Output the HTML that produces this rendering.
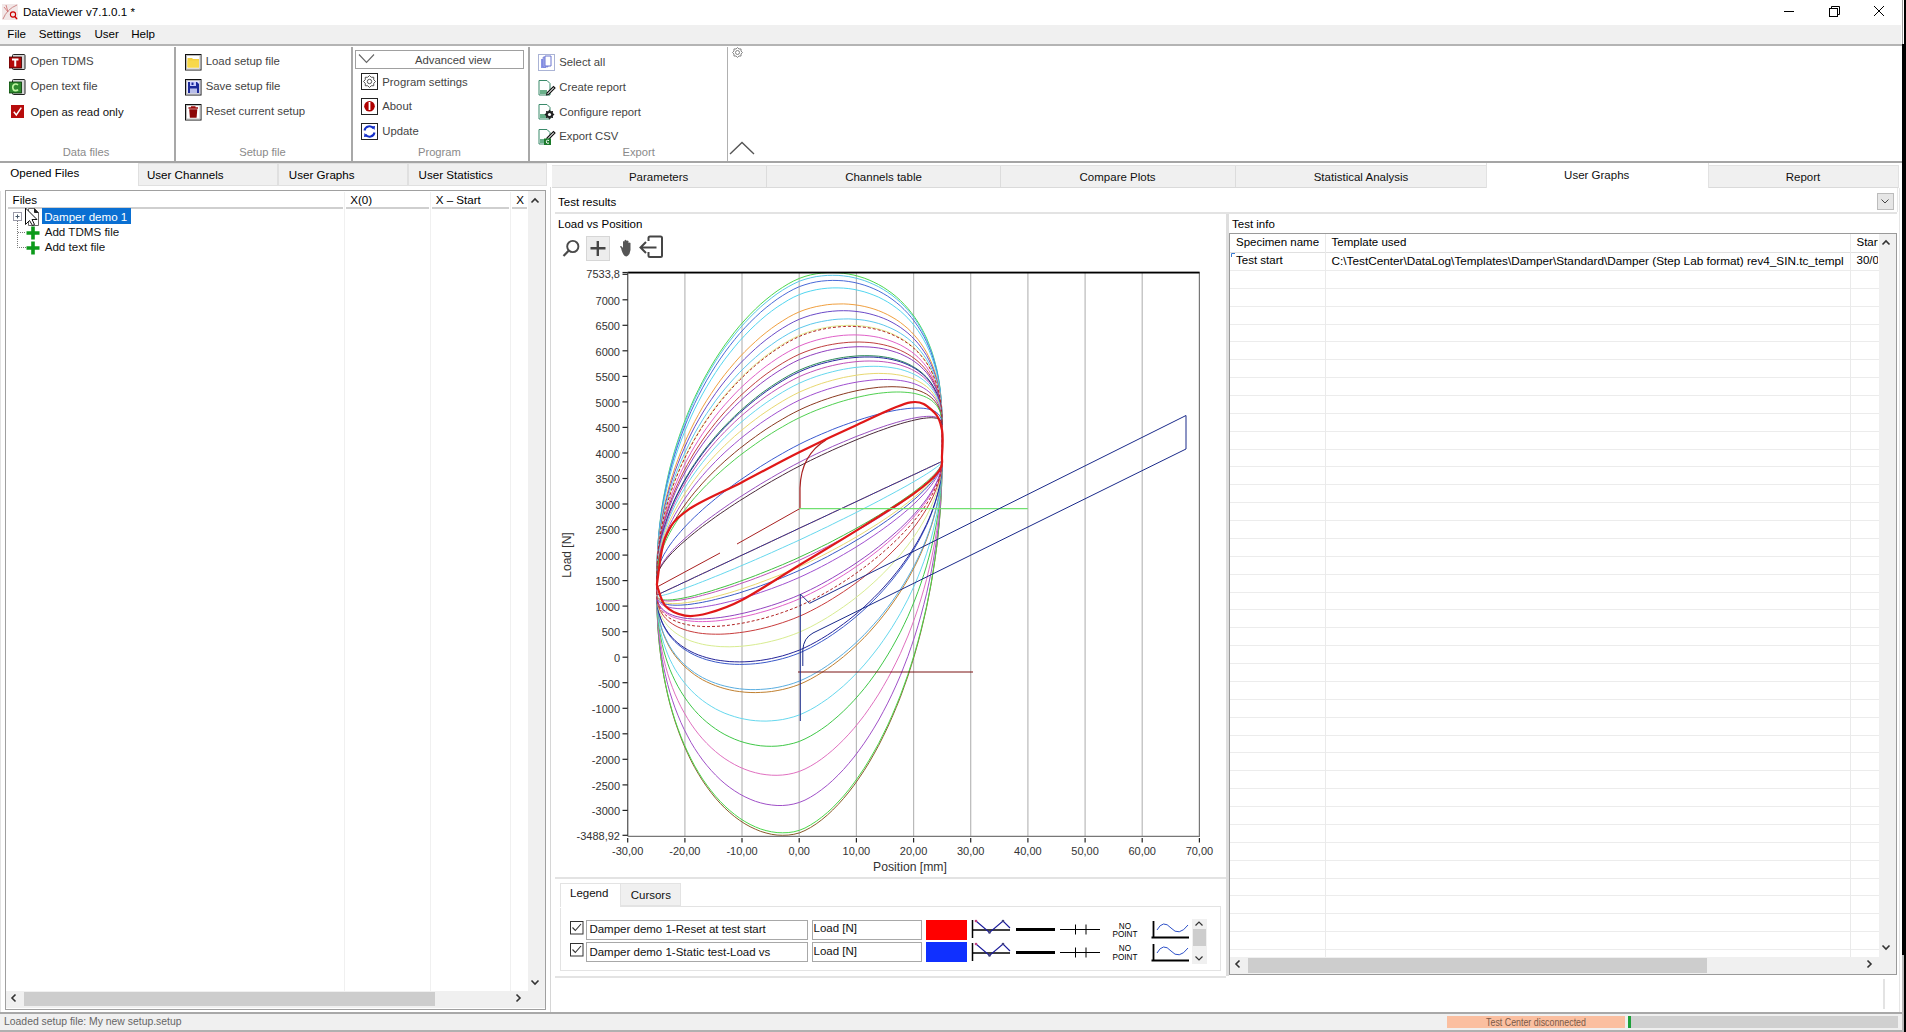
<!DOCTYPE html>
<html><head><meta charset="utf-8"><title>DataViewer</title>
<style>
html,body{margin:0;padding:0;width:1906px;height:1032px;overflow:hidden;background:#fff;position:relative}
.t{position:absolute;font-family:"Liberation Sans",sans-serif;line-height:1;white-space:nowrap}
.r{position:absolute;display:block}
</style></head><body>
<div class="r" style="left:0px;top:0px;width:1906px;height:25px;background:#fff;"></div>
<svg class="r" style="left:2px;top:4px;" width="16" height="16" viewBox="0 0 16 16"><rect x="0" y="0" width="16" height="16" fill="#f2e8e8"/><path d="M1 15 Q5 5 15 1" stroke="#c88" stroke-width="1" fill="none"/><path d="M2 3 L6 8 M4 1 L6 8" stroke="#c66" stroke-width="0.8" fill="none"/><circle cx="11" cy="10.5" r="2.6" stroke="#c00" stroke-width="1.1" fill="none"/><path d="M12.8 12.5 L15 15" stroke="#c00" stroke-width="1.3"/></svg>
<div class="t" style="left:23px;top:6.28px;font-size:11.6px;color:#000;">DataViewer v7.1.0.1 *</div>
<div class="r" style="left:1784px;top:11px;width:10px;height:1px;background:#000;"></div>
<svg class="r" style="left:1828px;top:5px;" width="14" height="12" viewBox="0 0 14 12"><rect x="1.5" y="3.5" width="8" height="8" fill="#fff" stroke="#000"/><path d="M3.5 3.5 V1.5 H11.5 V9.5 H9.5" fill="none" stroke="#000"/></svg>
<svg class="r" style="left:1873px;top:5px;" width="12" height="12" viewBox="0 0 12 12"><path d="M1 1 L11 11 M11 1 L1 11" stroke="#000" stroke-width="1"/></svg>
<div class="r" style="left:0px;top:25px;width:1901px;height:19px;background:#f0f0f0;"></div>
<div class="r" style="left:0px;top:44px;width:1902px;height:2px;background:#b4b4b4;"></div>
<div class="t" style="left:7.3px;top:27.78px;font-size:11.6px;color:#000;">File</div>
<div class="t" style="left:38.8px;top:27.78px;font-size:11.6px;color:#000;">Settings</div>
<div class="t" style="left:94.4px;top:27.78px;font-size:11.6px;color:#000;">User</div>
<div class="t" style="left:131.2px;top:27.78px;font-size:11.6px;color:#000;">Help</div>
<div class="r" style="left:1902px;top:0px;width:1px;height:44px;background:#9a9a9a;"></div>
<div class="r" style="left:1904px;top:0px;width:2px;height:1032px;background:#000;"></div>
<div class="r" style="left:1902px;top:44px;width:2px;height:911px;background:#000;"></div>
<div class="r" style="left:1902px;top:955px;width:1.5px;height:77px;background:#b8b8b8;"></div>
<div class="r" style="left:1903.5px;top:955px;width:0.5px;height:77px;background:#000;"></div>
<div class="r" style="left:174px;top:47px;width:1.5px;height:114px;background:#a8a8a8;"></div>
<div class="r" style="left:351px;top:47px;width:1.5px;height:114px;background:#a8a8a8;"></div>
<div class="r" style="left:528px;top:47px;width:1.5px;height:114px;background:#a8a8a8;"></div>
<div class="r" style="left:727px;top:47px;width:1px;height:114px;background:#b0b0b0;"></div>
<div class="r" style="left:0px;top:161px;width:1902px;height:2px;background:#a5a5a5;"></div>
<div class="t" style="left:86px;transform:translateX(-50%);top:147.02px;font-size:11.2px;color:#8a8a8a;">Data files</div>
<div class="t" style="left:262.5px;transform:translateX(-50%);top:147.02px;font-size:11.2px;color:#8a8a8a;">Setup file</div>
<div class="t" style="left:439.4px;transform:translateX(-50%);top:147.02px;font-size:11.2px;color:#8a8a8a;">Program</div>
<div class="t" style="left:638.7px;transform:translateX(-50%);top:147.02px;font-size:11.2px;color:#8a8a8a;">Export</div>
<svg class="r" style="left:9px;top:54px;" width="17" height="17" viewBox="0 0 17 17"><rect x="3.5" y="0.5" width="12.5" height="15" rx="1" fill="#d8d8d8" stroke="#222"/><rect x="0" y="3" width="12.5" height="11" fill="#b40a0a" stroke="#300" stroke-width="0.8"/><path d="M3 5.5 H9.5 M6.25 5.5 V12.5" stroke="#fff" stroke-width="2"/></svg>
<svg class="r" style="left:9px;top:79px;" width="17" height="17" viewBox="0 0 17 17"><rect x="3.5" y="0.5" width="12.5" height="15" rx="1" fill="#d8d8d8" stroke="#222"/><rect x="0" y="3" width="12.5" height="11" fill="#2f8a2f" stroke="#030" stroke-width="0.8"/><path d="M9 6 Q7.5 4.6 5.6 5.2 Q3.6 6 3.8 8.6 Q4 11.4 6.4 11.6 Q8 11.7 9 10.6" stroke="#bff5a0" stroke-width="1.6" fill="none"/></svg>
<svg class="r" style="left:11px;top:105px;" width="13" height="13" viewBox="0 0 13 13"><rect x="0" y="0" width="13" height="13" fill="#b70c0c"/><path d="M2.8 6.8 L5.3 10 L10.3 2.6" stroke="#fff" stroke-width="1.5" fill="none"/></svg>
<div class="t" style="left:30.5px;top:56.15px;font-size:11.4px;color:#444;">Open TDMS</div>
<div class="t" style="left:30.5px;top:81.15px;font-size:11.4px;color:#444;">Open text file</div>
<div class="t" style="left:30.5px;top:107.15px;font-size:11.4px;color:#111;">Open as read only</div>
<svg class="r" style="left:185px;top:54px;" width="17" height="17" viewBox="0 0 17 17"><rect x="0.5" y="0.5" width="15.5" height="15.5" fill="#fff" stroke="#111"/><rect x="1.5" y="1.5" width="13.5" height="13.5" fill="none" stroke="#bbb"/><path d="M2.5 4 H7 L8 5 H14 V13.5 H2.5 Z" fill="#f3cf3f"/><path d="M2.5 6.5 H14 V13.5 H2.5Z" fill="#f7d84a"/></svg>
<svg class="r" style="left:185px;top:79px;" width="17" height="17" viewBox="0 0 17 17"><rect x="0.5" y="0.5" width="15.5" height="15.5" fill="#e6e6ff" stroke="#111"/><rect x="1.5" y="1.5" width="13.5" height="13.5" fill="none" stroke="#bbb"/><path d="M3 3 H12 L14 5 V14 H3 Z" fill="#1c2a9a"/><rect x="5" y="3" width="6" height="4" fill="#c8ccff"/><rect x="6.5" y="3.5" width="2" height="2.5" fill="#1c2a9a"/><rect x="5" y="9.5" width="7" height="4.5" fill="#b8bde8"/></svg>
<svg class="r" style="left:185px;top:104px;" width="17" height="17" viewBox="0 0 17 17"><rect x="0.5" y="0.5" width="15.5" height="15.5" fill="#fff" stroke="#111"/><rect x="1.5" y="1.5" width="13.5" height="13.5" fill="none" stroke="#bbb"/><path d="M3.5 4 H13 M6 3 H10.5" stroke="#9a0a0a" stroke-width="1.4"/><path d="M4.2 5.2 H12.3 L11.6 13.8 H4.9 Z" fill="#8c0606"/></svg>
<div class="t" style="left:205.7px;top:56.15px;font-size:11.4px;color:#444;">Load setup file</div>
<div class="t" style="left:205.7px;top:81.15px;font-size:11.4px;color:#444;">Save setup file</div>
<div class="t" style="left:205.7px;top:106.15px;font-size:11.4px;color:#444;">Reset current setup</div>
<div class="r" style="left:355px;top:50px;width:169px;height:19px;background:#fff;box-shadow:inset 0 0 0 1px #a0a0a0;"></div>
<svg class="r" style="left:358px;top:52px;" width="17" height="14" viewBox="0 0 17 14"><path d="M1 2.5 L8.5 10.5 L16 2.5" stroke="#666" stroke-width="1.1" fill="none"/></svg>
<div class="t" style="left:415px;top:54.53px;font-size:11.3px;color:#444;">Advanced view</div>
<svg class="r" style="left:361px;top:73px;" width="17" height="17" viewBox="0 0 17 17"><rect x="0.5" y="0.5" width="16" height="16" fill="#fff" stroke="#222"/><polygon points="14.50,8.50 12.75,10.26 12.74,12.74 10.26,12.75 8.50,14.50 6.74,12.75 4.26,12.74 4.25,10.26 2.50,8.50 4.25,6.74 4.26,4.26 6.74,4.25 8.50,2.50 10.26,4.25 12.74,4.26 12.75,6.74" fill="none" stroke="#444" stroke-width="0.9"/><circle cx="8.5" cy="8.5" r="2.2" fill="none" stroke="#444" stroke-width="0.9"/></svg>
<svg class="r" style="left:361px;top:98px;" width="17" height="17" viewBox="0 0 17 17"><rect x="0.5" y="0.5" width="16" height="16" fill="#fff" stroke="#222"/><circle cx="8.5" cy="8.2" r="5.3" fill="#b00000"/><path d="M5 13 L6 11 L8 12Z" fill="#b00000"/><rect x="7.6" y="4" width="1.8" height="8" fill="#fff"/></svg>
<svg class="r" style="left:361px;top:123px;" width="17" height="17" viewBox="0 0 17 17"><rect x="0.5" y="0.5" width="16" height="16" fill="#fff" stroke="#222"/><path d="M3.5 7.5 A5 5 0 0 1 12.5 5.5" stroke="#1530c8" stroke-width="2" fill="none"/><path d="M13.5 9.5 A5 5 0 0 1 4.5 11.5" stroke="#1530c8" stroke-width="2" fill="none"/><path d="M10.5 3.5 L14 3 L13.5 7Z" fill="#1530c8"/><path d="M6.5 13.5 L3 14 L3.5 10Z" fill="#1530c8"/></svg>
<div class="t" style="left:382.3px;top:76.53px;font-size:11.3px;color:#444;">Program settings</div>
<div class="t" style="left:382.3px;top:101.43px;font-size:11.3px;color:#444;">About</div>
<div class="t" style="left:382.3px;top:126.13px;font-size:11.3px;color:#444;">Update</div>
<svg class="r" style="left:538px;top:54px;" width="17" height="17" viewBox="0 0 17 17"><rect x="0.5" y="0.5" width="16" height="16" fill="none" stroke="#5566aa" stroke-dasharray="1,1"/><path d="M3 5 H8 V14 H3Z" fill="#8c96e6"/><path d="M5 3 H10 V13 H5Z" fill="#a8b0f0" stroke="#6a74d0" stroke-width="0.6"/><path d="M7 2 H13 V12 H7Z" fill="#fff" stroke="#6a74d0"/></svg>
<svg class="r" style="left:538px;top:79px;" width="18" height="17" viewBox="0 0 18 17"><path d="M1 1.5 H9 L12 4.5 V16 H1Z" fill="#fff" stroke="#3a8a6a"/><rect x="2" y="11" width="7" height="4" fill="#6ab08a"/><path d="M9 14 L15.5 7.5 L17 9 L10.5 15.5 L8.6 15.8Z" fill="#fff" stroke="#111" stroke-width="1.1"/></svg>
<svg class="r" style="left:538px;top:103px;" width="18" height="17" viewBox="0 0 18 17"><path d="M1 1.5 H9 L12 4.5 V16 H1Z" fill="#fff" stroke="#3a8a6a"/><rect x="2" y="11" width="7" height="4" fill="#6ab08a"/><polygon points="16.50,11.50 14.83,12.88 15.04,15.04 12.88,14.83 11.50,16.50 10.12,14.83 7.96,15.04 8.17,12.88 6.50,11.50 8.17,10.12 7.96,7.96 10.12,8.17 11.50,6.50 12.88,8.17 15.04,7.96 14.83,10.12" fill="#222"/><circle cx="11.5" cy="11.5" r="1.6" fill="#fff"/></svg>
<svg class="r" style="left:538px;top:128px;" width="18" height="17" viewBox="0 0 18 17"><path d="M1 1.5 H9 L12 4.5 V16 H1Z" fill="#fff" stroke="#3a8a6a"/><rect x="2" y="11" width="7" height="4" fill="#6ab08a"/><path d="M9 10 L15.5 3.5 L17 5 L10.5 11.5 L8.6 11.8Z" fill="#fff" stroke="#111" stroke-width="1.1"/><rect x="6" y="10.5" width="7" height="6.5" fill="#1a7a2a"/><path d="M11 12.5 Q9.5 11.8 8.6 12.6 Q8 13.8 8.8 15 Q9.8 15.6 11 15" stroke="#fff" stroke-width="1" fill="none"/></svg>
<div class="t" style="left:559.3px;top:56.93px;font-size:11.3px;color:#444;">Select all</div>
<div class="t" style="left:559.3px;top:81.63px;font-size:11.3px;color:#444;">Create report</div>
<div class="t" style="left:559.3px;top:106.53px;font-size:11.3px;color:#444;">Configure report</div>
<div class="t" style="left:559.3px;top:131.23px;font-size:11.3px;color:#444;">Export CSV</div>
<svg class="r" style="left:732px;top:47px;" width="11" height="11" viewBox="0 0 11 11"><polygon points="10.50,5.50 9.01,6.95 9.04,9.04 6.95,9.01 5.50,10.50 4.05,9.01 1.96,9.04 1.99,6.95 0.50,5.50 1.99,4.05 1.96,1.96 4.05,1.99 5.50,0.50 6.95,1.99 9.04,1.96 9.01,4.05" fill="none" stroke="#777" stroke-width="0.9"/><circle cx="5.5" cy="5.5" r="2" fill="none" stroke="#777" stroke-width="0.9"/></svg>
<svg class="r" style="left:729px;top:140px;" width="26" height="16" viewBox="0 0 26 16"><path d="M1 14 L13 2.5 L25 14" stroke="#555" stroke-width="1.4" fill="none"/></svg>
<div class="r" style="left:0px;top:163px;width:547px;height:849px;background:#fff;"></div>
<div class="r" style="left:0px;top:163px;width:547px;height:23px;background:#f0f0f0;"></div>
<div class="r" style="left:0px;top:163px;width:1px;height:849px;background:#e3e3e3;"></div>
<div class="r" style="left:0px;top:163px;width:138px;height:28px;background:#fff;"></div>
<div class="r" style="left:138px;top:163px;width:140px;height:23px;background:#f0f0f0;box-shadow:inset 0 0 0 1px #e0e0e0;"></div>
<div class="r" style="left:278px;top:163px;width:130px;height:23px;background:#f0f0f0;box-shadow:inset 0 0 0 1px #e0e0e0;"></div>
<div class="r" style="left:408px;top:163px;width:139px;height:23px;background:#f0f0f0;box-shadow:inset 0 0 0 1px #e0e0e0;"></div>
<div class="t" style="left:10.3px;top:167.28px;font-size:11.6px;color:#000;">Opened Files</div>
<div class="t" style="left:146.9px;top:169.48px;font-size:11.6px;color:#000;">User Channels</div>
<div class="t" style="left:288.8px;top:169.48px;font-size:11.6px;color:#000;">User Graphs</div>
<div class="t" style="left:418.6px;top:169.48px;font-size:11.6px;color:#000;">User Statistics</div>
<div class="r" style="left:5px;top:190px;width:541px;height:820px;background:#fff;box-shadow:inset 0 0 0 1px #a0a0a0;"></div>
<div class="t" style="left:12.6px;top:194.18px;font-size:11.6px;color:#000;">Files</div>
<div class="t" style="left:350.2px;top:194.18px;font-size:11.6px;color:#000;">X(0)</div>
<div class="t" style="left:435.7px;top:194.18px;font-size:11.6px;color:#000;">X – Start</div>
<div class="t" style="left:516.2px;top:194.18px;font-size:11.6px;color:#000;">X</div>
<div class="r" style="left:8px;top:207px;width:335px;height:2px;background:#cfcfcf;"></div>
<div class="r" style="left:346px;top:207px;width:83px;height:2px;background:#cfcfcf;"></div>
<div class="r" style="left:432px;top:207px;width:77px;height:2px;background:#cfcfcf;"></div>
<div class="r" style="left:512px;top:207px;width:15px;height:2px;background:#cfcfcf;"></div>
<div class="r" style="left:344px;top:192px;width:1px;height:799px;background:#f0f0f0;"></div>
<div class="r" style="left:430px;top:192px;width:1px;height:799px;background:#f0f0f0;"></div>
<div class="r" style="left:510px;top:192px;width:1px;height:799px;background:#f0f0f0;"></div>
<div class="r" style="left:528px;top:191px;width:17px;height:800px;background:#f0f0f0;"></div>
<svg class="r" style="left:530px;top:196px;" width="12" height="12" viewBox="0 0 12 12"><path d="M1.5 6.5 L5 3 L8.5 6.5" stroke="#333" stroke-width="1.6" fill="none"/></svg>
<svg class="r" style="left:530px;top:977px;" width="12" height="12" viewBox="0 0 12 12"><path d="M1.5 3.5 L5 7 L8.5 3.5" stroke="#333" stroke-width="1.6" fill="none"/></svg>
<div class="r" style="left:6px;top:991px;width:539px;height:17px;background:#f0f0f0;"></div>
<div class="r" style="left:24px;top:992px;width:411px;height:14px;background:#cdcdcd;"></div>
<svg class="r" style="left:9px;top:993px;" width="12" height="12" viewBox="0 0 12 12"><path d="M6.5 1.5 L3 5 L6.5 8.5" stroke="#333" stroke-width="1.6" fill="none"/></svg>
<svg class="r" style="left:513px;top:993px;" width="12" height="12" viewBox="0 0 12 12"><path d="M3.5 1.5 L7 5 L3.5 8.5" stroke="#333" stroke-width="1.6" fill="none"/></svg>
<svg class="r" style="left:12px;top:205.2px;" width="34" height="50" viewBox="0 0 34 50"><rect x="1.5" y="7.5" width="8" height="8" fill="#fff" stroke="#9a9aa8"/><path d="M3.5 11.5 H7.5 M5.5 9.5 V13.5" stroke="#456"/><path d="M5.5 16 V42.5 H14 M6 27.5 H14" stroke="#777" stroke-dasharray="1,1" fill="none"/><path d="M16.5 3.5 H22.5 L26.5 7.5 V20.5 H16.5Z" fill="#fff" stroke="#666"/><path d="M22.5 3.5 V7.5 H26.5" fill="#222" stroke="#222"/><path d="M13.5 3 V19.5 L17.5 15.5 L20.5 20.5 L22.5 19.5 L20 14.5 L25 14.5Z" fill="#fff" stroke="#111" stroke-width="1"/></svg>
<div class="r" style="left:41.5px;top:208px;width:89px;height:15.6px;background:#0a6fd2;"></div>
<div class="t" style="left:44.2px;top:210.98px;font-size:11.6px;color:#fff;">Damper demo 1</div>
<svg class="r" style="left:26px;top:225.5px;" width="14" height="14" viewBox="0 0 14 14"><path d="M7 0.5 V13.5 M0.5 7 H13.5" stroke="#0c9a1a" stroke-width="3.6"/></svg>
<svg class="r" style="left:26px;top:241.3px;" width="14" height="14" viewBox="0 0 14 14"><path d="M7 0.5 V13.5 M0.5 7 H13.5" stroke="#0c9a1a" stroke-width="3.6"/></svg>
<div class="t" style="left:44.7px;top:225.98px;font-size:11.6px;color:#111;">Add TDMS file</div>
<div class="t" style="left:44.7px;top:241.48px;font-size:11.6px;color:#111;">Add text file</div>
<div class="r" style="left:547px;top:163px;width:5px;height:849px;background:#fff;"></div>
<div class="r" style="left:550px;top:187px;width:1px;height:825px;background:#d6d6d6;"></div>
<div class="r" style="left:0px;top:1012px;width:1902px;height:20px;background:#f0f0f0;"></div>
<div class="r" style="left:0px;top:1012px;width:1902px;height:1.5px;background:#a8a8a8;"></div>
<div class="r" style="left:0px;top:1030px;width:1902px;height:2px;background:#b0b0b0;"></div>
<div class="t" style="left:3.5px;top:1015.52px;font-size:11.2px;color:#666;transform:scaleX(0.93);transform-origin:0 0;">Loaded setup file: My new setup.setup</div>
<div class="r" style="left:1447px;top:1016px;width:178px;height:12px;background:#fbbfa0;"></div>
<div class="t" style="left:1536px;top:1017.16px;font-size:10.8px;color:#7a5a48;transform:translateX(-50%) scaleX(0.82);">Test Center disconnected</div>
<div class="r" style="left:1628px;top:1016px;width:2.5px;height:12px;background:#1ea03a;"></div>
<div class="r" style="left:1631px;top:1016px;width:267px;height:12px;background:#d0d0d0;"></div>
<div class="r" style="left:551px;top:163px;width:1351px;height:849px;background:#fff;"></div>
<div class="r" style="left:552px;top:165px;width:1347px;height:23px;background:#f0f0f0;"></div>
<div class="r" style="left:552px;top:165px;width:1347px;height:1px;background:#e2e2e2;"></div>
<div class="r" style="left:552px;top:187px;width:1347px;height:1px;background:#dadada;"></div>
<div class="r" style="left:766px;top:166px;width:1px;height:21px;background:#dcdcdc;"></div>
<div class="r" style="left:1000px;top:166px;width:1px;height:21px;background:#dcdcdc;"></div>
<div class="r" style="left:1235px;top:166px;width:1px;height:21px;background:#dcdcdc;"></div>
<div class="r" style="left:1486px;top:163px;width:223px;height:26px;background:#fff;"></div>
<div class="r" style="left:1486px;top:163px;width:1px;height:25px;background:#e2e2e2;"></div>
<div class="r" style="left:1708px;top:163px;width:1px;height:25px;background:#e2e2e2;"></div>
<div class="r" style="left:1898px;top:165px;width:1px;height:23px;background:#e2e2e2;"></div>
<div class="t" style="left:658.6px;transform:translateX(-50%);top:171.97px;font-size:11.5px;color:#111;">Parameters</div>
<div class="t" style="left:883.5px;transform:translateX(-50%);top:171.97px;font-size:11.5px;color:#111;">Channels table</div>
<div class="t" style="left:1117.6px;transform:translateX(-50%);top:171.97px;font-size:11.5px;color:#111;">Compare Plots</div>
<div class="t" style="left:1361px;transform:translateX(-50%);top:171.97px;font-size:11.5px;color:#111;">Statistical Analysis</div>
<div class="t" style="left:1803px;transform:translateX(-50%);top:171.97px;font-size:11.5px;color:#111;">Report</div>
<div class="t" style="left:1596.7px;transform:translateX(-50%);top:169.57px;font-size:11.5px;color:#111;">User Graphs</div>
<div class="t" style="left:558px;top:196.77px;font-size:11.5px;color:#000;">Test results</div>
<div class="r" style="left:555px;top:212px;width:1342px;height:2px;background:#e3e3e3;"></div>
<div class="r" style="left:1877px;top:193px;width:17px;height:17px;background:#e6e6e6;box-shadow:inset 0 0 0 1px #bcbcbc;"></div>
<svg class="r" style="left:1880px;top:196px;" width="11" height="11" viewBox="0 0 11 11"><path d="M1.5 3.5 L5 7 L8.5 3.5" stroke="#444" stroke-width="1" fill="none"/></svg>
<div class="r" style="left:1897px;top:188px;width:1px;height:24px;background:#e8e8e8;"></div>
<div class="r" style="left:1226px;top:214px;width:3px;height:762px;background:#dedede;"></div>
<div class="t" style="left:558px;top:218.57px;font-size:11.5px;color:#000;">Load vs Position</div>
<div class="t" style="left:1232px;top:218.77px;font-size:11.5px;color:#000;">Test info</div>
<div class="r" style="left:1229px;top:233px;width:668px;height:742px;background:#fff;box-shadow:inset 0 0 0 1px #9a9a9a;"></div>
<div class="r" style="left:1230px;top:269.9px;width:649px;height:1px;background:#ececec;"></div>
<div class="r" style="left:1230px;top:287.7px;width:649px;height:1px;background:#ececec;"></div>
<div class="r" style="left:1230px;top:305.6px;width:649px;height:1px;background:#ececec;"></div>
<div class="r" style="left:1230px;top:323.5px;width:649px;height:1px;background:#ececec;"></div>
<div class="r" style="left:1230px;top:341.4px;width:649px;height:1px;background:#ececec;"></div>
<div class="r" style="left:1230px;top:359.2px;width:649px;height:1px;background:#ececec;"></div>
<div class="r" style="left:1230px;top:377.1px;width:649px;height:1px;background:#ececec;"></div>
<div class="r" style="left:1230px;top:395.0px;width:649px;height:1px;background:#ececec;"></div>
<div class="r" style="left:1230px;top:412.8px;width:649px;height:1px;background:#ececec;"></div>
<div class="r" style="left:1230px;top:430.7px;width:649px;height:1px;background:#ececec;"></div>
<div class="r" style="left:1230px;top:448.6px;width:649px;height:1px;background:#ececec;"></div>
<div class="r" style="left:1230px;top:466.4px;width:649px;height:1px;background:#ececec;"></div>
<div class="r" style="left:1230px;top:484.3px;width:649px;height:1px;background:#ececec;"></div>
<div class="r" style="left:1230px;top:502.2px;width:649px;height:1px;background:#ececec;"></div>
<div class="r" style="left:1230px;top:520.0px;width:649px;height:1px;background:#ececec;"></div>
<div class="r" style="left:1230px;top:537.9px;width:649px;height:1px;background:#ececec;"></div>
<div class="r" style="left:1230px;top:555.8px;width:649px;height:1px;background:#ececec;"></div>
<div class="r" style="left:1230px;top:573.7px;width:649px;height:1px;background:#ececec;"></div>
<div class="r" style="left:1230px;top:591.5px;width:649px;height:1px;background:#ececec;"></div>
<div class="r" style="left:1230px;top:609.4px;width:649px;height:1px;background:#ececec;"></div>
<div class="r" style="left:1230px;top:627.3px;width:649px;height:1px;background:#ececec;"></div>
<div class="r" style="left:1230px;top:645.1px;width:649px;height:1px;background:#ececec;"></div>
<div class="r" style="left:1230px;top:663.0px;width:649px;height:1px;background:#ececec;"></div>
<div class="r" style="left:1230px;top:680.9px;width:649px;height:1px;background:#ececec;"></div>
<div class="r" style="left:1230px;top:698.8px;width:649px;height:1px;background:#ececec;"></div>
<div class="r" style="left:1230px;top:716.6px;width:649px;height:1px;background:#ececec;"></div>
<div class="r" style="left:1230px;top:734.5px;width:649px;height:1px;background:#ececec;"></div>
<div class="r" style="left:1230px;top:752.4px;width:649px;height:1px;background:#ececec;"></div>
<div class="r" style="left:1230px;top:770.2px;width:649px;height:1px;background:#ececec;"></div>
<div class="r" style="left:1230px;top:788.1px;width:649px;height:1px;background:#ececec;"></div>
<div class="r" style="left:1230px;top:806.0px;width:649px;height:1px;background:#ececec;"></div>
<div class="r" style="left:1230px;top:823.8px;width:649px;height:1px;background:#ececec;"></div>
<div class="r" style="left:1230px;top:841.7px;width:649px;height:1px;background:#ececec;"></div>
<div class="r" style="left:1230px;top:859.6px;width:649px;height:1px;background:#ececec;"></div>
<div class="r" style="left:1230px;top:877.5px;width:649px;height:1px;background:#ececec;"></div>
<div class="r" style="left:1230px;top:895.3px;width:649px;height:1px;background:#ececec;"></div>
<div class="r" style="left:1230px;top:913.2px;width:649px;height:1px;background:#ececec;"></div>
<div class="r" style="left:1230px;top:931.1px;width:649px;height:1px;background:#ececec;"></div>
<div class="r" style="left:1230px;top:948.9px;width:649px;height:1px;background:#ececec;"></div>
<div class="r" style="left:1230px;top:252px;width:649px;height:1px;background:#e0e0e0;"></div>
<div class="r" style="left:1325px;top:234px;width:1px;height:723px;background:#eaeaea;"></div>
<div class="r" style="left:1850px;top:234px;width:1px;height:723px;background:#eaeaea;"></div>
<div class="t" style="left:1236px;top:237.37px;font-size:11.5px;color:#000;">Specimen name</div>
<div class="t" style="left:1331.6px;top:237.37px;font-size:11.5px;color:#000;">Template used</div>
<div class="t" style="left:1856.5px;top:237.37px;font-size:11.5px;color:#000;">Start</div>
<div class="r" style="left:1878px;top:234px;width:1px;height:18px;background:#fff;"></div>
<div class="t" style="left:1236px;top:255.37px;font-size:11.5px;color:#000;">Test start</div>
<div class="t" style="left:1331.6px;top:255.15px;font-size:11.75px;color:#000;">C:\TestCenter\DataLog\Templates\Damper\Standard\Damper (Step Lab format) rev4_SIN.tc_templ</div>
<div class="t" style="left:1856.5px;top:255.37px;font-size:11.5px;color:#000;">30/0</div>
<div class="r" style="left:1878px;top:252px;width:1px;height:18px;background:#fff;"></div>
<svg class="r" style="left:1231px;top:253px;" width="4" height="4" viewBox="0 0 4 4"><path d="M0.5 4 V0.5 H4" stroke="#3a7ad0" fill="none"/></svg>
<div class="r" style="left:1879px;top:234px;width:17px;height:723px;background:#f0f0f0;"></div>
<svg class="r" style="left:1881px;top:238px;" width="12" height="12" viewBox="0 0 12 12"><path d="M1.5 6.5 L5 3 L8.5 6.5" stroke="#333" stroke-width="1.6" fill="none"/></svg>
<svg class="r" style="left:1881px;top:942px;" width="12" height="12" viewBox="0 0 12 12"><path d="M1.5 3.5 L5 7 L8.5 3.5" stroke="#333" stroke-width="1.6" fill="none"/></svg>
<div class="r" style="left:1230px;top:957px;width:666px;height:17px;background:#f0f0f0;"></div>
<div class="r" style="left:1248px;top:958px;width:459px;height:15px;background:#cdcdcd;"></div>
<svg class="r" style="left:1233px;top:959px;" width="12" height="12" viewBox="0 0 12 12"><path d="M6.5 1.5 L3 5 L6.5 8.5" stroke="#333" stroke-width="1.6" fill="none"/></svg>
<svg class="r" style="left:1864px;top:959px;" width="12" height="12" viewBox="0 0 12 12"><path d="M3.5 1.5 L7 5 L3.5 8.5" stroke="#333" stroke-width="1.6" fill="none"/></svg>
<div class="r" style="left:1882.5px;top:979px;width:2px;height:30px;background:#e3e3e3;"></div>
<div class="r" style="left:1898.5px;top:188px;width:1px;height:824px;background:#e6e6e6;"></div>
<div class="r" style="left:555px;top:876.5px;width:671px;height:2px;background:#e3e3e3;"></div>
<div class="r" style="left:560px;top:905.5px;width:661px;height:65px;background:#fff;box-shadow:inset 0 0 0 1px #e3e3e3;"></div>
<div class="r" style="left:620px;top:883px;width:61px;height:23px;background:#f0f0f0;box-shadow:inset 0 0 0 1px #e3e3e3;"></div>
<div class="r" style="left:560px;top:882.5px;width:61px;height:25px;background:#fff;"></div>
<div class="r" style="left:560px;top:882.5px;width:1px;height:24px;background:#e3e3e3;"></div>
<div class="r" style="left:560px;top:882.5px;width:61px;height:1px;background:#e3e3e3;"></div>
<div class="r" style="left:620px;top:882.5px;width:1px;height:24px;background:#e3e3e3;"></div>
<div class="t" style="left:570px;top:888.27px;font-size:11.5px;color:#111;">Legend</div>
<div class="t" style="left:630.7px;top:890.27px;font-size:11.5px;color:#111;">Cursors</div>
<div class="r" style="left:555px;top:975.5px;width:671px;height:2.5px;background:#e3e3e3;"></div>
<svg class="r" style="left:570px;top:920.5px;" width="14" height="14" viewBox="0 0 14 14"><rect x="0.5" y="0.5" width="12.5" height="12.5" fill="#fff" stroke="#333"/><path d="M2.5 6.5 L5.3 9.5 L11 3" stroke="#333" stroke-width="1.1" fill="none"/></svg>
<div class="r" style="left:586px;top:919.5px;width:222px;height:20px;background:#fff;box-shadow:inset 0 0 0 1px #a8a8a8;"></div>
<div class="t" style="left:589.4px;top:923.97px;font-size:11.5px;color:#111;">Damper demo 1-Reset at test start</div>
<div class="r" style="left:811.5px;top:919.5px;width:110.5px;height:20px;background:#fff;box-shadow:inset 0 0 0 1px #a8a8a8;"></div>
<div class="t" style="left:813.5px;top:922.97px;font-size:11.5px;color:#111;">Load [N]</div>
<div class="r" style="left:925.5px;top:919.5px;width:41px;height:20px;background:#ff0000;"></div>
<svg class="r" style="left:971px;top:918.0px;" width="40" height="22" viewBox="0 0 40 22"><path d="M1.5 2 V20 M1.5 12 H39" stroke="#000" stroke-width="1.5"/><path d="M5 3 L18.5 14.5 L32 3 L39 10" stroke="#1a1a9a" stroke-width="1.1" fill="none"/><circle cx="5" cy="3" r="1.3" fill="#c04080"/><circle cx="18.5" cy="14.5" r="1.3" fill="#404080"/><circle cx="32" cy="3" r="1.3" fill="#404080"/></svg>
<div class="r" style="left:1016px;top:928.0px;width:39px;height:3px;background:#000;"></div>
<svg class="r" style="left:1060px;top:923.0px;" width="40" height="12" viewBox="0 0 40 12"><path d="M0 6.5 H40 M15.5 1.5 V11.5 M26 1.5 V11.5" stroke="#000" stroke-width="1"/></svg>
<div class="t" style="left:1125px;transform:translateX(-50%);top:922.76px;font-size:8.2px;color:#000;">NO</div>
<div class="t" style="left:1125px;transform:translateX(-50%);top:931.16px;font-size:8.2px;color:#000;">POINT</div>
<svg class="r" style="left:1151px;top:920.0px;" width="40" height="20" viewBox="0 0 40 20"><path d="M2.5 1 V18.5 M0.5 17.5 H38" stroke="#000" stroke-width="1.8"/><path d="M6 10 Q12 -1 20 8 Q28 17 37 5" stroke="#2d50c8" stroke-width="1" fill="none"/></svg>
<svg class="r" style="left:570px;top:943.2px;" width="14" height="14" viewBox="0 0 14 14"><rect x="0.5" y="0.5" width="12.5" height="12.5" fill="#fff" stroke="#333"/><path d="M2.5 6.5 L5.3 9.5 L11 3" stroke="#333" stroke-width="1.1" fill="none"/></svg>
<div class="r" style="left:586px;top:942.2px;width:222px;height:20px;background:#fff;box-shadow:inset 0 0 0 1px #a8a8a8;"></div>
<div class="t" style="left:589.4px;top:946.67px;font-size:11.5px;color:#111;">Damper demo 1-Static test-Load vs</div>
<div class="r" style="left:811.5px;top:942.2px;width:110.5px;height:20px;background:#fff;box-shadow:inset 0 0 0 1px #a8a8a8;"></div>
<div class="t" style="left:813.5px;top:945.67px;font-size:11.5px;color:#111;">Load [N]</div>
<div class="r" style="left:925.5px;top:942.2px;width:41px;height:20px;background:#1030ff;"></div>
<svg class="r" style="left:971px;top:940.7px;" width="40" height="22" viewBox="0 0 40 22"><path d="M1.5 2 V20 M1.5 12 H39" stroke="#000" stroke-width="1.5"/><path d="M5 3 L18.5 14.5 L32 3 L39 10" stroke="#1a1a9a" stroke-width="1.1" fill="none"/><circle cx="5" cy="3" r="1.3" fill="#c04080"/><circle cx="18.5" cy="14.5" r="1.3" fill="#404080"/><circle cx="32" cy="3" r="1.3" fill="#404080"/></svg>
<div class="r" style="left:1016px;top:950.7px;width:39px;height:3px;background:#000;"></div>
<svg class="r" style="left:1060px;top:945.7px;" width="40" height="12" viewBox="0 0 40 12"><path d="M0 6.5 H40 M15.5 1.5 V11.5 M26 1.5 V11.5" stroke="#000" stroke-width="1"/></svg>
<div class="t" style="left:1125px;transform:translateX(-50%);top:945.46px;font-size:8.2px;color:#000;">NO</div>
<div class="t" style="left:1125px;transform:translateX(-50%);top:953.86px;font-size:8.2px;color:#000;">POINT</div>
<svg class="r" style="left:1151px;top:942.7px;" width="40" height="20" viewBox="0 0 40 20"><path d="M2.5 1 V18.5 M0.5 17.5 H38" stroke="#000" stroke-width="1.8"/><path d="M6 10 Q12 -1 20 8 Q28 17 37 5" stroke="#2d50c8" stroke-width="1" fill="none"/></svg>
<div class="r" style="left:1192px;top:918.5px;width:15px;height:45px;background:#f0f0f0;"></div>
<div class="r" style="left:1193px;top:929px;width:13px;height:16.5px;background:#cdcdcd;"></div>
<svg class="r" style="left:1194px;top:919px;" width="11" height="10" viewBox="0 0 11 10"><path d="M1.5 6.5 L5 3 L8.5 6.5" stroke="#333" stroke-width="1.2" fill="none"/></svg>
<svg class="r" style="left:1194px;top:953px;" width="11" height="10" viewBox="0 0 11 10"><path d="M1.5 3.5 L5 7 L8.5 3.5" stroke="#333" stroke-width="1.2" fill="none"/></svg>
<svg class="r" style="left:561px;top:238px;" width="22" height="22" viewBox="0 0 22 22"><circle cx="11.8" cy="8.5" r="5.6" fill="none" stroke="#4a4a4a" stroke-width="1.9"/><path d="M7.8 12.6 L2.5 18" stroke="#4a4a4a" stroke-width="2.2"/></svg>
<div class="r" style="left:586px;top:236px;width:24px;height:25px;background:#ededed;box-shadow:inset 0 0 0 1px #d6d6d6;"></div>
<svg class="r" style="left:586px;top:236px;" width="24" height="25" viewBox="0 0 24 25"><path d="M4.5 12.3 H19.5 M11.8 5 V20" stroke="#454545" stroke-width="2.4"/></svg>
<svg class="r" style="left:617px;top:238px;" width="18" height="20" viewBox="0 0 18 20"><path d="M4 10 Q2.5 8.5 3.5 8 Q5 8 6 10 V4 Q6.5 2.5 7.5 3.5 V9 V2.5 Q8.5 1 9.5 2.5 V9 V3 Q10.5 2 11.5 3 V9.5 V5 Q12.5 4 13.5 5 V12 Q13 17 9.5 18.5 Q6 18.5 4 10Z" fill="#555"/></svg>
<svg class="r" style="left:638px;top:235px;" width="26" height="24" viewBox="0 0 26 24"><path d="M10.5 6 V3 Q10.5 1.5 12 1.5 H22.5 Q24 1.5 24 3 V20.5 Q24 22 22.5 22 H12 Q10.5 22 10.5 20.5 V17" stroke="#454545" stroke-width="2" fill="none"/><path d="M18.5 12.5 H3 M8 7 L2.5 12.5 L8 18" stroke="#454545" stroke-width="2" fill="none"/></svg>
<svg class="r" style="left:0;top:0" width="1906" height="1032"><path d="M684.9 272.3 V836.3" stroke="#b9b9b9" stroke-width="1.2"/><path d="M742.0 272.3 V836.3" stroke="#b9b9b9" stroke-width="1.2"/><path d="M799.2 272.3 V836.3" stroke="#b9b9b9" stroke-width="1.2"/><path d="M856.4 272.3 V836.3" stroke="#b9b9b9" stroke-width="1.2"/><path d="M913.6 272.3 V836.3" stroke="#b9b9b9" stroke-width="1.2"/><path d="M970.7 272.3 V836.3" stroke="#b9b9b9" stroke-width="1.2"/><path d="M1027.9 272.3 V836.3" stroke="#b9b9b9" stroke-width="1.2"/><path d="M1085.1 272.3 V836.3" stroke="#b9b9b9" stroke-width="1.2"/><path d="M1142.2 272.3 V836.3" stroke="#b9b9b9" stroke-width="1.2"/><path d="M942.0 461.4 L941.9 473.5 L941.6 485.6 L941.0 497.9 L940.3 510.1 L939.3 522.4 L938.1 534.7 L936.7 547.0 L935.0 559.3 L933.2 571.5 L931.2 583.6 L928.9 595.7 L926.5 607.7 L923.8 619.5 L921.0 631.2 L918.0 642.7 L914.8 654.0 L911.4 665.2 L907.9 676.1 L904.1 686.8 L900.3 697.3 L896.2 707.5 L892.0 717.4 L887.7 727.1 L883.2 736.4 L878.7 745.4 L873.9 754.1 L869.1 762.5 L864.2 770.4 L859.1 778.0 L854.0 785.3 L848.8 792.1 L843.5 798.5 L838.1 804.5 L832.7 810.0 L827.3 815.1 L821.7 819.8 L816.2 823.9 L810.6 827.5 L805.0 830.5 L799.4 832.9 L793.8 834.3 L788.2 835.1 L782.7 835.3 L777.1 835.1 L771.6 834.3 L766.1 833.0 L760.7 831.4 L755.4 829.2 L750.1 826.7 L744.9 823.8 L739.7 820.4 L734.7 816.7 L729.8 812.6 L724.9 808.1 L720.2 803.3 L715.6 798.2 L711.2 792.7 L706.8 786.8 L702.6 780.7 L698.6 774.2 L694.7 767.5 L691.0 760.5 L687.5 753.1 L684.1 745.6 L680.9 737.7 L677.9 729.6 L675.0 721.3 L672.4 712.7 L669.9 703.9 L667.7 694.9 L665.7 685.7 L663.8 676.3 L662.2 666.7 L660.8 656.9 L659.6 646.9 L658.6 636.8 L657.8 626.6 L657.3 616.2 L657.0 605.7 L656.8 595.1" stroke="#8a5a2a" stroke-width="1" fill="none"/><path d="M656.8 578.8 L657.0 567.0 L657.3 556.3 L657.8 545.9 L658.6 535.8 L659.6 525.8 L660.8 515.9 L662.2 506.1 L663.8 496.4 L665.7 486.8 L667.7 477.3 L669.9 467.9 L672.4 458.7 L675.0 449.5 L677.9 440.4 L680.9 431.5 L684.1 422.8 L687.5 414.1 L691.0 405.7 L694.7 397.4 L698.6 389.3 L702.6 381.4 L706.8 373.7 L711.2 366.1 L715.6 358.8 L720.2 351.8 L724.9 344.9 L729.8 338.3 L734.7 331.9 L739.7 325.8 L744.9 320.0 L750.1 314.4 L755.4 309.1 L760.7 304.1 L766.1 299.5 L771.6 295.1 L777.1 291.0 L782.7 287.3 L788.2 283.9 L793.8 280.9 L799.4 278.4 L805.0 276.4 L810.6 274.9 L816.2 273.8 L821.7 273.1 L827.3 272.7 L832.7 272.6 L838.1 272.8 L843.5 273.3 L848.8 274.1 L854.0 275.1 L859.1 276.5 L864.2 278.1 L869.1 280.0 L873.9 282.2 L878.7 284.6 L883.2 287.2 L887.7 290.2 L892.0 293.3 L896.2 296.7 L900.3 300.4 L904.1 304.3 L907.9 308.4 L911.4 312.8 L914.8 317.4 L918.0 322.2 L921.0 327.2 L923.8 332.5 L926.5 338.0 L928.9 343.8 L931.2 349.7 L933.2 355.9 L935.0 362.4 L936.7 369.0 L938.1 375.9 L939.3 383.1 L940.3 390.6 L941.0 398.3 L941.6 406.4 L941.9 415.0 L942.0 424.8" stroke="#4cd84c" stroke-width="1" fill="none"/><path d="M942.0 461.4 L941.9 473.4 L941.6 485.4 L941.0 497.5 L940.3 509.7 L939.3 521.9 L938.1 534.1 L936.7 546.3 L935.0 558.5 L933.2 570.6 L931.2 582.7 L928.9 594.6 L926.5 606.5 L923.8 618.2 L921.0 629.8 L918.0 641.3 L914.8 652.5 L911.4 663.6 L907.9 674.5 L904.1 685.1 L900.3 695.5 L896.2 705.6 L892.0 715.5 L887.7 725.1 L883.2 734.3 L878.7 743.3 L873.9 751.9 L869.1 760.2 L864.2 768.2 L859.1 775.7 L854.0 782.9 L848.8 789.7 L843.5 796.1 L838.1 802.0 L832.7 807.6 L827.3 812.6 L821.7 817.2 L816.2 821.3 L810.6 824.9 L805.0 828.0 L799.4 830.3 L793.8 831.8 L788.2 832.6 L782.7 832.8 L777.1 832.6 L771.6 831.8 L766.1 830.6 L760.7 829.0 L755.4 826.9 L750.1 824.4 L744.9 821.5 L739.7 818.2 L734.7 814.5 L729.8 810.5 L724.9 806.1 L720.2 801.3 L715.6 796.2 L711.2 790.8 L706.8 785.0 L702.6 779.0 L698.6 772.6 L694.7 765.9 L691.0 758.9 L687.5 751.7 L684.1 744.2 L680.9 736.4 L677.9 728.4 L675.0 720.1 L672.4 711.7 L669.9 702.9 L667.7 694.0 L665.7 684.9 L663.8 675.5 L662.2 666.0 L660.8 656.3 L659.6 646.5 L658.6 636.5 L657.8 626.3 L657.3 616.0 L657.0 605.6 L656.8 595.1" stroke="#4cd84c" stroke-width="1" fill="none"/><path d="M656.8 578.8 L657.0 567.1 L657.3 556.6 L657.8 546.3 L658.6 536.3 L659.6 526.4 L660.8 516.7 L662.2 507.0 L663.8 497.4 L665.7 487.9 L667.7 478.6 L669.9 469.3 L672.4 460.1 L675.0 451.0 L677.9 442.1 L680.9 433.2 L684.1 424.6 L687.5 416.0 L691.0 407.7 L694.7 399.5 L698.6 391.4 L702.6 383.6 L706.8 375.9 L711.2 368.5 L715.6 361.2 L720.2 354.2 L724.9 347.4 L729.8 340.9 L734.7 334.6 L739.7 328.5 L744.9 322.7 L750.1 317.2 L755.4 311.9 L760.7 306.9 L766.1 302.3 L771.6 297.9 L777.1 293.8 L782.7 290.1 L788.2 286.8 L793.8 283.8 L799.4 281.2 L805.0 279.3 L810.6 277.8 L816.2 276.6 L821.7 275.9 L827.3 275.4 L832.7 275.3 L838.1 275.4 L843.5 275.9 L848.8 276.6 L854.0 277.7 L859.1 279.0 L864.2 280.5 L869.1 282.4 L873.9 284.5 L878.7 286.8 L883.2 289.4 L887.7 292.3 L892.0 295.3 L896.2 298.7 L900.3 302.3 L904.1 306.1 L907.9 310.1 L911.4 314.4 L914.8 318.9 L918.0 323.7 L921.0 328.6 L923.8 333.8 L926.5 339.3 L928.9 344.9 L931.2 350.8 L933.2 356.9 L935.0 363.2 L936.7 369.8 L938.1 376.6 L939.3 383.7 L940.3 391.0 L941.0 398.7 L941.6 406.7 L941.9 415.2 L942.0 424.8" stroke="#58c8e8" stroke-width="1" fill="none"/><path d="M942.0 461.4 L941.9 472.3 L941.6 483.2 L941.0 494.3 L940.3 505.3 L939.3 516.5 L938.1 527.6 L936.7 538.7 L935.0 549.8 L933.2 560.9 L931.2 571.9 L928.9 582.9 L926.5 593.8 L923.8 604.5 L921.0 615.2 L918.0 625.7 L914.8 636.1 L911.4 646.3 L907.9 656.3 L904.1 666.1 L900.3 675.7 L896.2 685.1 L892.0 694.2 L887.7 703.1 L883.2 711.7 L878.7 720.0 L873.9 728.1 L869.1 735.8 L864.2 743.2 L859.1 750.3 L854.0 757.1 L848.8 763.4 L843.5 769.5 L838.1 775.1 L832.7 780.4 L827.3 785.2 L821.7 789.6 L816.2 793.6 L810.6 797.1 L805.0 800.1 L799.4 802.4 L793.8 804.0 L788.2 805.0 L782.7 805.5 L777.1 805.5 L771.6 805.0 L766.1 804.2 L760.7 802.9 L755.4 801.3 L750.1 799.2 L744.9 796.8 L739.7 794.0 L734.7 790.9 L729.8 787.5 L724.9 783.7 L720.2 779.6 L715.6 775.1 L711.2 770.4 L706.8 765.3 L702.6 760.0 L698.6 754.4 L694.7 748.5 L691.0 742.4 L687.5 735.9 L684.1 729.3 L680.9 722.4 L677.9 715.2 L675.0 707.8 L672.4 700.2 L669.9 692.4 L667.7 684.4 L665.7 676.2 L663.8 667.8 L662.2 659.3 L660.8 650.5 L659.6 641.6 L658.6 632.6 L657.8 623.4 L657.3 614.1 L657.0 604.7 L656.8 595.1" stroke="#a050c8" stroke-width="1" fill="none"/><path d="M656.8 578.8 L657.0 567.4 L657.3 557.1 L657.8 547.1 L658.6 537.3 L659.6 527.7 L660.8 518.1 L662.2 508.7 L663.8 499.3 L665.7 490.1 L667.7 480.9 L669.9 471.8 L672.4 462.8 L675.0 453.9 L677.9 445.1 L680.9 436.5 L684.1 428.0 L687.5 419.6 L691.0 411.4 L694.7 403.4 L698.6 395.5 L702.6 387.8 L706.8 380.2 L711.2 372.9 L715.6 365.8 L720.2 358.9 L724.9 352.2 L729.8 345.7 L734.7 339.5 L739.7 333.5 L744.9 327.8 L750.1 322.3 L755.4 317.2 L760.7 312.2 L766.1 307.6 L771.6 303.3 L777.1 299.2 L782.7 295.5 L788.2 292.2 L793.8 289.2 L799.4 286.6 L805.0 284.7 L810.6 283.1 L816.2 281.9 L821.7 281.1 L827.3 280.6 L832.7 280.4 L838.1 280.5 L843.5 280.8 L848.8 281.5 L854.0 282.4 L859.1 283.6 L864.2 285.1 L869.1 286.8 L873.9 288.8 L878.7 291.0 L883.2 293.5 L887.7 296.2 L892.0 299.2 L896.2 302.4 L900.3 305.8 L904.1 309.5 L907.9 313.4 L911.4 317.5 L914.8 321.9 L918.0 326.5 L921.0 331.3 L923.8 336.3 L926.5 341.6 L928.9 347.0 L931.2 352.7 L933.2 358.7 L935.0 364.8 L936.7 371.2 L938.1 377.8 L939.3 384.7 L940.3 391.9 L941.0 399.3 L941.6 407.1 L941.9 415.4 L942.0 424.8" stroke="#4a6ad8" stroke-width="1" fill="none"/><path d="M942.0 461.4 L941.9 471.0 L941.6 480.8 L941.0 490.6 L940.3 500.5 L939.3 510.4 L938.1 520.3 L936.7 530.3 L935.0 540.2 L933.2 550.1 L931.2 560.0 L928.9 569.8 L926.5 579.6 L923.8 589.3 L921.0 598.9 L918.0 608.4 L914.8 617.7 L911.4 627.0 L907.9 636.0 L904.1 644.9 L900.3 653.7 L896.2 662.2 L892.0 670.5 L887.7 678.6 L883.2 686.5 L878.7 694.1 L873.9 701.5 L869.1 708.6 L864.2 715.5 L859.1 722.0 L854.0 728.3 L848.8 734.2 L843.5 739.8 L838.1 745.1 L832.7 750.1 L827.3 754.6 L821.7 758.9 L816.2 762.7 L810.6 766.1 L805.0 769.0 L799.4 771.4 L793.8 773.1 L788.2 774.3 L782.7 775.0 L777.1 775.3 L771.6 775.2 L766.1 774.7 L760.7 773.9 L755.4 772.7 L750.1 771.2 L744.9 769.3 L739.7 767.1 L734.7 764.6 L729.8 761.8 L724.9 758.7 L720.2 755.3 L715.6 751.6 L711.2 747.7 L706.8 743.4 L702.6 738.9 L698.6 734.2 L694.7 729.1 L691.0 723.9 L687.5 718.4 L684.1 712.6 L680.9 706.7 L677.9 700.5 L675.0 694.1 L672.4 687.5 L669.9 680.7 L667.7 673.7 L665.7 666.6 L663.8 659.2 L662.2 651.7 L660.8 644.0 L659.6 636.2 L658.6 628.3 L657.8 620.2 L657.3 611.9 L657.0 603.6 L656.8 595.1" stroke="#e070c0" stroke-width="1" fill="none"/><path d="M656.8 578.8 L657.0 567.8 L657.3 557.9 L657.8 548.3 L658.6 538.8 L659.6 529.5 L660.8 520.3 L662.2 511.2 L663.8 502.1 L665.7 493.1 L667.7 484.3 L669.9 475.5 L672.4 466.8 L675.0 458.1 L677.9 449.6 L680.9 441.3 L684.1 433.0 L687.5 424.9 L691.0 416.9 L694.7 409.1 L698.6 401.4 L702.6 393.9 L706.8 386.6 L711.2 379.4 L715.6 372.5 L720.2 365.7 L724.9 359.2 L729.8 352.9 L734.7 346.8 L739.7 340.9 L744.9 335.3 L750.1 329.9 L755.4 324.8 L760.7 320.0 L766.1 315.4 L771.6 311.1 L777.1 307.1 L782.7 303.5 L788.2 300.1 L793.8 297.1 L799.4 294.6 L805.0 292.5 L810.6 291.0 L816.2 289.7 L821.7 288.8 L827.3 288.2 L832.7 287.9 L838.1 287.9 L843.5 288.1 L848.8 288.6 L854.0 289.4 L859.1 290.5 L864.2 291.8 L869.1 293.4 L873.9 295.2 L878.7 297.2 L883.2 299.5 L887.7 302.0 L892.0 304.8 L896.2 307.8 L900.3 311.0 L904.1 314.5 L907.9 318.2 L911.4 322.1 L914.8 326.2 L918.0 330.6 L921.0 335.1 L923.8 339.9 L926.5 344.9 L928.9 350.2 L931.2 355.6 L933.2 361.3 L935.0 367.2 L936.7 373.3 L938.1 379.6 L939.3 386.2 L940.3 393.1 L941.0 400.3 L941.6 407.8 L941.9 415.7 L942.0 424.8" stroke="#52d6f0" stroke-width="1" fill="none"/><path d="M942.0 461.4 L941.9 469.9 L941.6 478.4 L941.0 487.0 L940.3 495.7 L939.3 504.5 L938.1 513.3 L936.7 522.1 L935.0 530.9 L933.2 539.7 L931.2 548.5 L928.9 557.2 L926.5 565.9 L923.8 574.6 L921.0 583.1 L918.0 591.6 L914.8 600.0 L911.4 608.3 L907.9 616.4 L904.1 624.5 L900.3 632.3 L896.2 640.0 L892.0 647.6 L887.7 654.9 L883.2 662.1 L878.7 669.0 L873.9 675.8 L869.1 682.3 L864.2 688.6 L859.1 694.6 L854.0 700.4 L848.8 705.9 L843.5 711.1 L838.1 716.1 L832.7 720.7 L827.3 725.1 L821.7 729.1 L816.2 732.7 L810.6 736.0 L805.0 738.9 L799.4 741.4 L793.8 743.2 L788.2 744.5 L782.7 745.5 L777.1 746.1 L771.6 746.3 L766.1 746.2 L760.7 745.8 L755.4 745.0 L750.1 744.0 L744.9 742.7 L739.7 741.1 L734.7 739.2 L729.8 737.0 L724.9 734.6 L720.2 731.9 L715.6 728.9 L711.2 725.7 L706.8 722.2 L702.6 718.5 L698.6 714.6 L694.7 710.4 L691.0 706.0 L687.5 701.4 L684.1 696.5 L680.9 691.5 L677.9 686.3 L675.0 680.8 L672.4 675.2 L669.9 669.4 L667.7 663.4 L665.7 657.2 L663.8 650.9 L662.2 644.4 L660.8 637.8 L659.6 631.0 L658.6 624.1 L657.8 617.0 L657.3 609.8 L657.0 602.5 L656.8 595.1" stroke="#40c848" stroke-width="1" fill="none"/><path d="M656.8 578.8 L657.0 568.7 L657.3 559.6 L657.8 550.8 L658.6 542.1 L659.6 533.5 L660.8 525.0 L662.2 516.6 L663.8 508.2 L665.7 499.9 L667.7 491.7 L669.9 483.5 L672.4 475.4 L675.0 467.4 L677.9 459.5 L680.9 451.6 L684.1 443.9 L687.5 436.3 L691.0 428.9 L694.7 421.5 L698.6 414.3 L702.6 407.2 L706.8 400.3 L711.2 393.6 L715.6 387.0 L720.2 380.6 L724.9 374.4 L729.8 368.4 L734.7 362.6 L739.7 357.0 L744.9 351.6 L750.1 346.5 L755.4 341.6 L760.7 336.9 L766.1 332.5 L771.6 328.3 L777.1 324.4 L782.7 320.8 L788.2 317.4 L793.8 314.4 L799.4 311.8 L805.0 309.7 L810.6 308.0 L816.2 306.6 L821.7 305.6 L827.3 304.7 L832.7 304.2 L838.1 304.0 L843.5 303.9 L848.8 304.2 L854.0 304.7 L859.1 305.4 L864.2 306.4 L869.1 307.6 L873.9 309.0 L878.7 310.7 L883.2 312.6 L887.7 314.7 L892.0 317.1 L896.2 319.6 L900.3 322.4 L904.1 325.4 L907.9 328.6 L911.4 332.0 L914.8 335.7 L918.0 339.5 L921.0 343.6 L923.8 347.8 L926.5 352.3 L928.9 357.0 L931.2 361.9 L933.2 367.0 L935.0 372.3 L936.7 377.8 L938.1 383.6 L939.3 389.6 L940.3 395.8 L941.0 402.4 L941.6 409.2 L941.9 416.5 L942.0 424.8" stroke="#f0a040" stroke-width="1" fill="none"/><path d="M942.0 461.4 L941.9 468.8 L941.6 476.3 L941.0 483.9 L940.3 491.6 L939.3 499.3 L938.1 507.0 L936.7 514.8 L935.0 522.6 L933.2 530.5 L931.2 538.3 L928.9 546.1 L926.5 553.8 L923.8 561.6 L921.0 569.2 L918.0 576.8 L914.8 584.4 L911.4 591.8 L907.9 599.2 L904.1 606.4 L900.3 613.5 L896.2 620.5 L892.0 627.4 L887.7 634.0 L883.2 640.6 L878.7 646.9 L873.9 653.1 L869.1 659.1 L864.2 664.9 L859.1 670.5 L854.0 675.8 L848.8 681.0 L843.5 685.9 L838.1 690.5 L832.7 694.9 L827.3 699.0 L821.7 702.8 L816.2 706.4 L810.6 709.6 L805.0 712.4 L799.4 714.9 L793.8 716.8 L788.2 718.3 L782.7 719.5 L777.1 720.3 L771.6 720.8 L766.1 721.1 L760.7 721.0 L755.4 720.7 L750.1 720.1 L744.9 719.2 L739.7 718.1 L734.7 716.7 L729.8 715.1 L724.9 713.3 L720.2 711.2 L715.6 708.9 L711.2 706.3 L706.8 703.5 L702.6 700.5 L698.6 697.3 L694.7 693.9 L691.0 690.2 L687.5 686.4 L684.1 682.4 L680.9 678.1 L677.9 673.7 L675.0 669.1 L672.4 664.3 L669.9 659.4 L667.7 654.3 L665.7 649.0 L663.8 643.6 L662.2 638.0 L660.8 632.2 L659.6 626.4 L658.6 620.4 L657.8 614.2 L657.3 608.0 L657.0 601.6 L656.8 595.1" stroke="#66d8ee" stroke-width="1" fill="none"/><path d="M656.8 578.8 L657.0 569.1 L657.3 560.3 L657.8 551.8 L658.6 543.5 L659.6 535.2 L660.8 527.0 L662.2 518.9 L663.8 510.8 L665.7 502.8 L667.7 494.8 L669.9 486.9 L672.4 479.1 L675.0 471.3 L677.9 463.7 L680.9 456.1 L684.1 448.6 L687.5 441.2 L691.0 434.0 L694.7 426.8 L698.6 419.8 L702.6 413.0 L706.8 406.2 L711.2 399.7 L715.6 393.3 L720.2 387.0 L724.9 381.0 L729.8 375.1 L734.7 369.4 L739.7 363.9 L744.9 358.6 L750.1 353.6 L755.4 348.7 L760.7 344.1 L766.1 339.7 L771.6 335.6 L777.1 331.7 L782.7 328.1 L788.2 324.8 L793.8 321.8 L799.4 319.2 L805.0 317.1 L810.6 315.3 L816.2 313.9 L821.7 312.7 L827.3 311.8 L832.7 311.2 L838.1 310.8 L843.5 310.7 L848.8 310.8 L854.0 311.2 L859.1 311.8 L864.2 312.6 L869.1 313.7 L873.9 315.0 L878.7 316.5 L883.2 318.2 L887.7 320.1 L892.0 322.3 L896.2 324.7 L900.3 327.3 L904.1 330.1 L907.9 333.1 L911.4 336.3 L914.8 339.7 L918.0 343.3 L921.0 347.2 L923.8 351.2 L926.5 355.4 L928.9 359.9 L931.2 364.5 L933.2 369.4 L935.0 374.5 L936.7 379.8 L938.1 385.3 L939.3 391.0 L940.3 397.0 L941.0 403.3 L941.6 409.8 L941.9 416.8 L942.0 424.8" stroke="#6a4ac8" stroke-width="1" fill="none"/><path d="M942.0 461.4 L941.9 467.6 L941.6 473.9 L941.0 480.3 L940.3 486.8 L939.3 493.3 L938.1 499.9 L936.7 506.5 L935.0 513.2 L933.2 519.8 L931.2 526.5 L928.9 533.2 L926.5 539.9 L923.8 546.6 L921.0 553.2 L918.0 559.8 L914.8 566.3 L911.4 572.8 L907.9 579.2 L904.1 585.6 L900.3 591.8 L896.2 598.0 L892.0 604.0 L887.7 610.0 L883.2 615.8 L878.7 621.4 L873.9 627.0 L869.1 632.4 L864.2 637.6 L859.1 642.6 L854.0 647.5 L848.8 652.2 L843.5 656.7 L838.1 661.0 L832.7 665.1 L827.3 668.9 L821.7 672.6 L816.2 675.9 L810.6 679.1 L805.0 681.9 L799.4 684.4 L793.8 686.4 L788.2 688.1 L782.7 689.5 L777.1 690.6 L771.6 691.5 L766.1 692.1 L760.7 692.4 L755.4 692.6 L750.1 692.5 L744.9 692.2 L739.7 691.6 L734.7 690.9 L729.8 689.9 L724.9 688.7 L720.2 687.3 L715.6 685.7 L711.2 683.9 L706.8 681.9 L702.6 679.8 L698.6 677.4 L694.7 674.8 L691.0 672.0 L687.5 669.1 L684.1 666.0 L680.9 662.7 L677.9 659.2 L675.0 655.6 L672.4 651.8 L669.9 647.9 L667.7 643.8 L665.7 639.5 L663.8 635.1 L662.2 630.6 L660.8 625.9 L659.6 621.0 L658.6 616.1 L657.8 611.0 L657.3 605.8 L657.0 600.5 L656.8 595.1" stroke="#c08030" stroke-width="1" fill="none"/><path d="M656.8 578.8 L657.0 569.6 L657.3 561.3 L657.8 553.1 L658.6 545.2 L659.6 537.3 L660.8 529.5 L662.2 521.7 L663.8 514.0 L665.7 506.3 L667.7 498.7 L669.9 491.1 L672.4 483.6 L675.0 476.2 L677.9 468.8 L680.9 461.5 L684.1 454.3 L687.5 447.2 L691.0 440.2 L694.7 433.3 L698.6 426.6 L702.6 419.9 L706.8 413.4 L711.2 407.1 L715.6 400.8 L720.2 394.8 L724.9 388.9 L729.8 383.2 L734.7 377.7 L739.7 372.3 L744.9 367.2 L750.1 362.2 L755.4 357.5 L760.7 352.9 L766.1 348.6 L771.6 344.6 L777.1 340.7 L782.7 337.2 L788.2 333.9 L793.8 330.9 L799.4 328.2 L805.0 326.1 L810.6 324.2 L816.2 322.7 L821.7 321.5 L827.3 320.5 L832.7 319.7 L838.1 319.2 L843.5 319.0 L848.8 318.9 L854.0 319.2 L859.1 319.6 L864.2 320.2 L869.1 321.1 L873.9 322.2 L878.7 323.5 L883.2 325.0 L887.7 326.8 L892.0 328.7 L896.2 330.8 L900.3 333.2 L904.1 335.7 L907.9 338.5 L911.4 341.5 L914.8 344.6 L918.0 348.0 L921.0 351.6 L923.8 355.3 L926.5 359.3 L928.9 363.4 L931.2 367.8 L933.2 372.4 L935.0 377.1 L936.7 382.1 L938.1 387.3 L939.3 392.8 L940.3 398.4 L941.0 404.3 L941.6 410.6 L941.9 417.2 L942.0 424.8" stroke="#5cc8ec" stroke-width="1" fill="none"/><path d="M942.0 461.4 L941.9 467.5 L941.6 473.7 L941.0 479.9 L940.3 486.3 L939.3 492.7 L938.1 499.1 L936.7 505.6 L935.0 512.2 L933.2 518.7 L931.2 525.3 L928.9 531.9 L926.5 538.4 L923.8 545.0 L921.0 551.5 L918.0 558.0 L914.8 564.4 L911.4 570.8 L907.9 577.1 L904.1 583.4 L900.3 589.5 L896.2 595.6 L892.0 601.6 L887.7 607.4 L883.2 613.2 L878.7 618.8 L873.9 624.2 L869.1 629.5 L864.2 634.7 L859.1 639.7 L854.0 644.5 L848.8 649.1 L843.5 653.6 L838.1 657.9 L832.7 661.9 L827.3 665.7 L821.7 669.4 L816.2 672.7 L810.6 675.8 L805.0 678.6 L799.4 681.1 L793.8 683.2 L788.2 684.9 L782.7 686.3 L777.1 687.5 L771.6 688.4 L766.1 689.0 L760.7 689.4 L755.4 689.6 L750.1 689.6 L744.9 689.3 L739.7 688.8 L734.7 688.1 L729.8 687.2 L724.9 686.1 L720.2 684.8 L715.6 683.3 L711.2 681.6 L706.8 679.7 L702.6 677.6 L698.6 675.3 L694.7 672.8 L691.0 670.1 L687.5 667.3 L684.1 664.3 L680.9 661.1 L677.9 657.7 L675.0 654.2 L672.4 650.5 L669.9 646.7 L667.7 642.7 L665.7 638.5 L663.8 634.2 L662.2 629.8 L660.8 625.2 L659.6 620.5 L658.6 615.6 L657.8 610.7 L657.3 605.6 L657.0 600.4 L656.8 595.1" stroke="#5aaee0" stroke-width="1" fill="none"/><path d="M656.8 578.8 L657.0 570.0 L657.3 562.0 L657.8 554.2 L658.6 546.5 L659.6 538.9 L660.8 531.4 L662.2 523.9 L663.8 516.5 L665.7 509.1 L667.7 501.7 L669.9 494.4 L672.4 487.1 L675.0 479.9 L677.9 472.8 L680.9 465.8 L684.1 458.8 L687.5 451.9 L691.0 445.1 L694.7 438.4 L698.6 431.8 L702.6 425.4 L706.8 419.1 L711.2 412.9 L715.6 406.8 L720.2 400.9 L724.9 395.1 L729.8 389.6 L734.7 384.1 L739.7 378.9 L744.9 373.8 L750.1 369.0 L755.4 364.3 L760.7 359.8 L766.1 355.6 L771.6 351.6 L777.1 347.8 L782.7 344.2 L788.2 341.0 L793.8 338.0 L799.4 335.3 L805.0 333.1 L810.6 331.2 L816.2 329.6 L821.7 328.3 L827.3 327.2 L832.7 326.4 L838.1 325.8 L843.5 325.5 L848.8 325.3 L854.0 325.4 L859.1 325.7 L864.2 326.2 L869.1 326.9 L873.9 327.9 L878.7 329.0 L883.2 330.4 L887.7 331.9 L892.0 333.7 L896.2 335.7 L900.3 337.8 L904.1 340.2 L907.9 342.8 L911.4 345.5 L914.8 348.5 L918.0 351.7 L921.0 355.0 L923.8 358.5 L926.5 362.3 L928.9 366.2 L931.2 370.4 L933.2 374.7 L935.0 379.2 L936.7 384.0 L938.1 388.9 L939.3 394.1 L940.3 399.5 L941.0 405.2 L941.6 411.2 L941.9 417.5 L942.0 424.8" stroke="#e4ec90" stroke-width="1" fill="none"/><path d="M942.0 461.4 L941.9 466.4 L941.6 471.4 L941.0 476.6 L940.3 481.8 L939.3 487.1 L938.1 492.5 L936.7 497.9 L935.0 503.4 L933.2 508.9 L931.2 514.4 L928.9 520.0 L926.5 525.6 L923.8 531.1 L921.0 536.7 L918.0 542.3 L914.8 547.8 L911.4 553.3 L907.9 558.8 L904.1 564.2 L900.3 569.5 L896.2 574.8 L892.0 580.1 L887.7 585.2 L883.2 590.3 L878.7 595.2 L873.9 600.1 L869.1 604.8 L864.2 609.5 L859.1 614.0 L854.0 618.4 L848.8 622.6 L843.5 626.7 L838.1 630.6 L832.7 634.4 L827.3 638.0 L821.7 641.4 L816.2 644.6 L810.6 647.7 L805.0 650.4 L799.4 653.0 L793.8 655.1 L788.2 657.0 L782.7 658.6 L777.1 660.0 L771.6 661.2 L766.1 662.3 L760.7 663.1 L755.4 663.7 L750.1 664.1 L744.9 664.3 L739.7 664.4 L734.7 664.3 L729.8 664.0 L724.9 663.5 L720.2 662.8 L715.6 662.0 L711.2 660.9 L706.8 659.8 L702.6 658.4 L698.6 656.9 L694.7 655.2 L691.0 653.3 L687.5 651.3 L684.1 649.2 L680.9 646.8 L677.9 644.4 L675.0 641.7 L672.4 638.9 L669.9 636.0 L667.7 633.0 L665.7 629.7 L663.8 626.4 L662.2 622.9 L660.8 619.3 L659.6 615.6 L658.6 611.7 L657.8 607.7 L657.3 603.6 L657.0 599.4 L656.8 595.1" stroke="#3a58c8" stroke-width="1" fill="none"/><path d="M656.8 578.8 L657.0 570.5 L657.3 563.0 L657.8 555.7 L658.6 548.5 L659.6 541.4 L660.8 534.3 L662.2 527.3 L663.8 520.3 L665.7 513.3 L667.7 506.3 L669.9 499.4 L672.4 492.5 L675.0 485.7 L677.9 478.9 L680.9 472.2 L684.1 465.6 L687.5 459.0 L691.0 452.6 L694.7 446.2 L698.6 439.9 L702.6 433.7 L706.8 427.7 L711.2 421.7 L715.6 415.9 L720.2 410.2 L724.9 404.7 L729.8 399.3 L734.7 394.0 L739.7 388.9 L744.9 384.0 L750.1 379.3 L755.4 374.8 L760.7 370.4 L766.1 366.2 L771.6 362.3 L777.1 358.5 L782.7 355.0 L788.2 351.8 L793.8 348.8 L799.4 346.1 L805.0 343.8 L810.6 341.9 L816.2 340.2 L821.7 338.8 L827.3 337.6 L832.7 336.6 L838.1 335.9 L843.5 335.3 L848.8 335.0 L854.0 334.9 L859.1 335.0 L864.2 335.3 L869.1 335.8 L873.9 336.5 L878.7 337.4 L883.2 338.6 L887.7 339.9 L892.0 341.4 L896.2 343.1 L900.3 344.9 L904.1 347.0 L907.9 349.3 L911.4 351.7 L914.8 354.4 L918.0 357.2 L921.0 360.3 L923.8 363.5 L926.5 366.9 L928.9 370.5 L931.2 374.3 L933.2 378.3 L935.0 382.4 L936.7 386.8 L938.1 391.4 L939.3 396.2 L940.3 401.2 L941.0 406.5 L941.6 412.1 L941.9 418.0 L942.0 424.8" stroke="#e060c8" stroke-width="1" fill="none"/><path d="M942.0 461.4 L941.9 466.2 L941.6 471.2 L941.0 476.2 L940.3 481.4 L939.3 486.6 L938.1 491.8 L936.7 497.1 L935.0 502.5 L933.2 507.9 L931.2 513.3 L928.9 518.8 L926.5 524.3 L923.8 529.7 L921.0 535.2 L918.0 540.7 L914.8 546.1 L911.4 551.5 L907.9 556.9 L904.1 562.2 L900.3 567.5 L896.2 572.7 L892.0 577.9 L887.7 582.9 L883.2 587.9 L878.7 592.8 L873.9 597.6 L869.1 602.3 L864.2 606.9 L859.1 611.4 L854.0 615.7 L848.8 619.9 L843.5 623.9 L838.1 627.8 L832.7 631.6 L827.3 635.2 L821.7 638.6 L816.2 641.8 L810.6 644.8 L805.0 647.6 L799.4 650.1 L793.8 652.2 L788.2 654.1 L782.7 655.8 L777.1 657.2 L771.6 658.5 L766.1 659.5 L760.7 660.4 L755.4 661.0 L750.1 661.5 L744.9 661.8 L739.7 661.9 L734.7 661.8 L729.8 661.6 L724.9 661.1 L720.2 660.5 L715.6 659.8 L711.2 658.8 L706.8 657.7 L702.6 656.4 L698.6 655.0 L694.7 653.4 L691.0 651.6 L687.5 649.7 L684.1 647.6 L680.9 645.4 L677.9 643.0 L675.0 640.5 L672.4 637.8 L669.9 634.9 L667.7 632.0 L665.7 628.8 L663.8 625.6 L662.2 622.2 L660.8 618.7 L659.6 615.1 L658.6 611.3 L657.8 607.4 L657.3 603.4 L657.0 599.3 L656.8 595.1" stroke="#24249a" stroke-width="1" fill="none"/><path d="M656.8 578.8 L657.0 571.0 L657.3 563.8 L657.8 556.9 L658.6 550.1 L659.6 543.3 L660.8 536.5 L662.2 529.8 L663.8 523.1 L665.7 516.4 L667.7 509.8 L669.9 503.2 L672.4 496.6 L675.0 490.0 L677.9 483.5 L680.9 477.1 L684.1 470.7 L687.5 464.4 L691.0 458.2 L694.7 452.0 L698.6 446.0 L702.6 440.0 L706.8 434.1 L711.2 428.4 L715.6 422.7 L720.2 417.2 L724.9 411.8 L729.8 406.6 L734.7 401.5 L739.7 396.5 L744.9 391.7 L750.1 387.1 L755.4 382.6 L760.7 378.3 L766.1 374.2 L771.6 370.3 L777.1 366.6 L782.7 363.1 L788.2 359.9 L793.8 356.9 L799.4 354.2 L805.0 351.9 L810.6 349.9 L816.2 348.1 L821.7 346.6 L827.3 345.3 L832.7 344.3 L838.1 343.4 L843.5 342.8 L848.8 342.3 L854.0 342.1 L859.1 342.0 L864.2 342.2 L869.1 342.5 L873.9 343.0 L878.7 343.8 L883.2 344.7 L887.7 345.8 L892.0 347.1 L896.2 348.6 L900.3 350.3 L904.1 352.1 L907.9 354.2 L911.4 356.4 L914.8 358.8 L918.0 361.4 L921.0 364.2 L923.8 367.2 L926.5 370.3 L928.9 373.7 L931.2 377.2 L933.2 380.9 L935.0 384.8 L936.7 388.9 L938.1 393.3 L939.3 397.8 L940.3 402.5 L941.0 407.5 L941.6 412.7 L941.9 418.4 L942.0 424.8" stroke="#c04040" stroke-width="1" fill="none"/><path d="M942.0 461.4 L941.9 465.5 L941.6 469.8 L941.0 474.1 L940.3 478.6 L939.3 483.1 L938.1 487.6 L936.7 492.3 L935.0 496.9 L933.2 501.7 L931.2 506.4 L928.9 511.3 L926.5 516.1 L923.8 520.9 L921.0 525.8 L918.0 530.7 L914.8 535.5 L911.4 540.4 L907.9 545.2 L904.1 550.0 L900.3 554.8 L896.2 559.5 L892.0 564.2 L887.7 568.8 L883.2 573.4 L878.7 577.9 L873.9 582.3 L869.1 586.6 L864.2 590.9 L859.1 595.0 L854.0 599.1 L848.8 603.0 L843.5 606.8 L838.1 610.5 L832.7 614.1 L827.3 617.5 L821.7 620.8 L816.2 623.9 L810.6 626.9 L805.0 629.6 L799.4 632.2 L793.8 634.4 L788.2 636.4 L782.7 638.2 L777.1 639.8 L771.6 641.2 L766.1 642.5 L760.7 643.6 L755.4 644.5 L750.1 645.3 L744.9 645.9 L739.7 646.4 L734.7 646.6 L729.8 646.8 L724.9 646.7 L720.2 646.6 L715.6 646.2 L711.2 645.7 L706.8 645.1 L702.6 644.3 L698.6 643.3 L694.7 642.2 L691.0 641.0 L687.5 639.6 L684.1 638.0 L680.9 636.3 L677.9 634.5 L675.0 632.5 L672.4 630.4 L669.9 628.2 L667.7 625.8 L665.7 623.3 L663.8 620.6 L662.2 617.9 L660.8 615.0 L659.6 611.9 L658.6 608.8 L657.8 605.5 L657.3 602.2 L657.0 598.7 L656.8 595.1" stroke="#d8ec90" stroke-width="1" fill="none"/><path d="M656.8 578.8 L657.0 571.3 L657.3 564.4 L657.8 557.7 L658.6 551.1 L659.6 544.5 L660.8 538.0 L662.2 531.5 L663.8 525.0 L665.7 518.6 L667.7 512.1 L669.9 505.7 L672.4 499.3 L675.0 492.9 L677.9 486.6 L680.9 480.4 L684.1 474.2 L687.5 468.0 L691.0 461.9 L694.7 455.9 L698.6 450.0 L702.6 444.2 L706.8 438.5 L711.2 432.8 L715.6 427.3 L720.2 421.9 L724.9 416.6 L729.8 411.5 L734.7 406.4 L739.7 401.6 L744.9 396.8 L750.1 392.3 L755.4 387.9 L760.7 383.6 L766.1 379.6 L771.6 375.7 L777.1 372.0 L782.7 368.6 L788.2 365.3 L793.8 362.3 L799.4 359.6 L805.0 357.3 L810.6 355.3 L816.2 353.5 L821.7 351.9 L827.3 350.5 L832.7 349.4 L838.1 348.5 L843.5 347.7 L848.8 347.2 L854.0 346.9 L859.1 346.7 L864.2 346.8 L869.1 347.0 L873.9 347.4 L878.7 348.0 L883.2 348.8 L887.7 349.8 L892.0 351.0 L896.2 352.3 L900.3 353.8 L904.1 355.6 L907.9 357.5 L911.4 359.5 L914.8 361.8 L918.0 364.2 L921.0 366.9 L923.8 369.7 L926.5 372.6 L928.9 375.8 L931.2 379.2 L933.2 382.7 L935.0 386.4 L936.7 390.4 L938.1 394.5 L939.3 398.8 L940.3 403.4 L941.0 408.1 L941.6 413.2 L941.9 418.6 L942.0 424.8" stroke="#9040c0" stroke-width="1" fill="none"/><path d="M942.0 461.4 L941.9 464.9 L941.6 468.5 L941.0 472.3 L940.3 476.1 L939.3 479.9 L938.1 483.9 L936.7 487.9 L935.0 492.0 L933.2 496.2 L931.2 500.4 L928.9 504.6 L926.5 508.9 L923.8 513.2 L921.0 517.5 L918.0 521.8 L914.8 526.2 L911.4 530.5 L907.9 534.9 L904.1 539.2 L900.3 543.5 L896.2 547.8 L892.0 552.1 L887.7 556.3 L883.2 560.5 L878.7 564.6 L873.9 568.7 L869.1 572.7 L864.2 576.7 L859.1 580.6 L854.0 584.4 L848.8 588.1 L843.5 591.7 L838.1 595.2 L832.7 598.6 L827.3 601.9 L821.7 605.1 L816.2 608.1 L810.6 611.0 L805.0 613.8 L799.4 616.3 L793.8 618.6 L788.2 620.7 L782.7 622.6 L777.1 624.4 L771.6 626.0 L766.1 627.5 L760.7 628.8 L755.4 630.0 L750.1 631.0 L744.9 631.9 L739.7 632.6 L734.7 633.2 L729.8 633.7 L724.9 634.0 L720.2 634.2 L715.6 634.2 L711.2 634.1 L706.8 633.9 L702.6 633.5 L698.6 633.0 L694.7 632.3 L691.0 631.5 L687.5 630.6 L684.1 629.5 L680.9 628.3 L677.9 627.0 L675.0 625.5 L672.4 623.9 L669.9 622.2 L667.7 620.3 L665.7 618.4 L663.8 616.2 L662.2 614.0 L660.8 611.7 L659.6 609.2 L658.6 606.6 L657.8 603.9 L657.3 601.1 L657.0 598.1 L656.8 595.1" stroke="#c83c3c" stroke-width="1" fill="none"/><path d="M656.8 578.8 L657.0 571.8 L657.3 565.4 L657.8 559.2 L658.6 553.1 L659.6 547.0 L660.8 540.9 L662.2 534.8 L663.8 528.7 L665.7 522.7 L667.7 516.6 L669.9 510.6 L672.4 504.6 L675.0 498.6 L677.9 492.6 L680.9 486.7 L684.1 480.8 L687.5 475.0 L691.0 469.2 L694.7 463.5 L698.6 457.9 L702.6 452.3 L706.8 446.9 L711.2 441.5 L715.6 436.2 L720.2 431.0 L724.9 425.9 L729.8 420.9 L734.7 416.1 L739.7 411.4 L744.9 406.8 L750.1 402.4 L755.4 398.1 L760.7 393.9 L766.1 390.0 L771.6 386.2 L777.1 382.6 L782.7 379.1 L788.2 375.9 L793.8 372.9 L799.4 370.2 L805.0 367.8 L810.6 365.7 L816.2 363.8 L821.7 362.1 L827.3 360.6 L832.7 359.4 L838.1 358.3 L843.5 357.4 L848.8 356.7 L854.0 356.2 L859.1 355.8 L864.2 355.7 L869.1 355.7 L873.9 355.9 L878.7 356.2 L883.2 356.8 L887.7 357.5 L892.0 358.4 L896.2 359.5 L900.3 360.8 L904.1 362.2 L907.9 363.8 L911.4 365.6 L914.8 367.6 L918.0 369.7 L921.0 372.0 L923.8 374.5 L926.5 377.1 L928.9 380.0 L931.2 383.0 L933.2 386.2 L935.0 389.6 L936.7 393.1 L938.1 396.9 L939.3 400.9 L940.3 405.0 L941.0 409.4 L941.6 414.1 L941.9 419.1 L942.0 424.8" stroke="#2a8a5a" stroke-width="1" fill="none"/><path d="M942.0 461.4 L941.9 464.2 L941.6 467.2 L941.0 470.2 L940.3 473.3 L939.3 476.5 L938.1 479.8 L936.7 483.2 L935.0 486.6 L933.2 490.1 L931.2 493.6 L928.9 497.2 L926.5 500.9 L923.8 504.6 L921.0 508.3 L918.0 512.0 L914.8 515.8 L911.4 519.6 L907.9 523.4 L904.1 527.3 L900.3 531.1 L896.2 534.9 L892.0 538.7 L887.7 542.5 L883.2 546.3 L878.7 550.0 L873.9 553.7 L869.1 557.4 L864.2 561.0 L859.1 564.6 L854.0 568.1 L848.8 571.6 L843.5 575.0 L838.1 578.3 L832.7 581.5 L827.3 584.7 L821.7 587.8 L816.2 590.7 L810.6 593.5 L805.0 596.3 L799.4 598.8 L793.8 601.2 L788.2 603.4 L782.7 605.4 L777.1 607.4 L771.6 609.2 L766.1 610.9 L760.7 612.4 L755.4 613.9 L750.1 615.2 L744.9 616.4 L739.7 617.4 L734.7 618.4 L729.8 619.2 L724.9 619.9 L720.2 620.5 L715.6 621.0 L711.2 621.3 L706.8 621.5 L702.6 621.6 L698.6 621.6 L694.7 621.4 L691.0 621.1 L687.5 620.7 L684.1 620.2 L680.9 619.5 L677.9 618.7 L675.0 617.8 L672.4 616.8 L669.9 615.6 L667.7 614.3 L665.7 612.9 L663.8 611.4 L662.2 609.8 L660.8 608.0 L659.6 606.1 L658.6 604.1 L657.8 602.1 L657.3 599.8 L657.0 597.5 L656.8 595.1" stroke="#e060c8" stroke-width="1" fill="none"/><path d="M656.8 578.8 L657.0 571.9 L657.3 565.6 L657.8 559.5 L658.6 553.4 L659.6 547.3 L660.8 541.3 L662.2 535.3 L663.8 529.3 L665.7 523.3 L667.7 517.3 L669.9 511.3 L672.4 505.4 L675.0 499.4 L677.9 493.5 L680.9 487.7 L684.1 481.8 L687.5 476.1 L691.0 470.3 L694.7 464.7 L698.6 459.1 L702.6 453.6 L706.8 448.1 L711.2 442.8 L715.6 437.5 L720.2 432.4 L724.9 427.3 L729.8 422.4 L734.7 417.5 L739.7 412.9 L744.9 408.3 L750.1 403.9 L755.4 399.6 L760.7 395.5 L766.1 391.5 L771.6 387.7 L777.1 384.1 L782.7 380.7 L788.2 377.5 L793.8 374.5 L799.4 371.8 L805.0 369.4 L810.6 367.2 L816.2 365.3 L821.7 363.6 L827.3 362.2 L832.7 360.9 L838.1 359.8 L843.5 358.8 L848.8 358.1 L854.0 357.6 L859.1 357.2 L864.2 357.0 L869.1 357.0 L873.9 357.1 L878.7 357.5 L883.2 358.0 L887.7 358.7 L892.0 359.6 L896.2 360.6 L900.3 361.8 L904.1 363.2 L907.9 364.8 L911.4 366.5 L914.8 368.4 L918.0 370.5 L921.0 372.8 L923.8 375.2 L926.5 377.8 L928.9 380.6 L931.2 383.6 L933.2 386.7 L935.0 390.0 L936.7 393.6 L938.1 397.3 L939.3 401.2 L940.3 405.3 L941.0 409.6 L941.6 414.2 L941.9 419.1 L942.0 424.8" stroke="#2a2aa0" stroke-width="1" fill="none"/><path d="M942.0 461.4 L941.9 464.1 L941.6 466.8 L941.0 469.7 L940.3 472.7 L939.3 475.7 L938.1 478.9 L936.7 482.1 L935.0 485.4 L933.2 488.7 L931.2 492.1 L928.9 495.6 L926.5 499.1 L923.8 502.6 L921.0 506.2 L918.0 509.9 L914.8 513.5 L911.4 517.2 L907.9 520.9 L904.1 524.6 L900.3 528.3 L896.2 532.0 L892.0 535.7 L887.7 539.4 L883.2 543.1 L878.7 546.7 L873.9 550.4 L869.1 554.0 L864.2 557.5 L859.1 561.0 L854.0 564.5 L848.8 567.9 L843.5 571.2 L838.1 574.5 L832.7 577.7 L827.3 580.8 L821.7 583.9 L816.2 586.8 L810.6 589.6 L805.0 592.3 L799.4 594.9 L793.8 597.3 L788.2 599.5 L782.7 601.6 L777.1 603.6 L771.6 605.4 L766.1 607.1 L760.7 608.7 L755.4 610.2 L750.1 611.6 L744.9 612.9 L739.7 614.0 L734.7 615.1 L729.8 616.0 L724.9 616.8 L720.2 617.5 L715.6 618.0 L711.2 618.4 L706.8 618.7 L702.6 618.9 L698.6 619.0 L694.7 619.0 L691.0 618.8 L687.5 618.5 L684.1 618.1 L680.9 617.5 L677.9 616.8 L675.0 616.1 L672.4 615.1 L669.9 614.1 L667.7 613.0 L665.7 611.7 L663.8 610.3 L662.2 608.8 L660.8 607.2 L659.6 605.4 L658.6 603.6 L657.8 601.6 L657.3 599.6 L657.0 597.4 L656.8 595.1" stroke="#9444c0" stroke-width="1" fill="none"/><path d="M656.8 578.8 L657.0 572.2 L657.3 566.1 L657.8 560.2 L658.6 554.3 L659.6 548.5 L660.8 542.6 L662.2 536.8 L663.8 531.0 L665.7 525.2 L667.7 519.4 L669.9 513.6 L672.4 507.8 L675.0 502.0 L677.9 496.3 L680.9 490.6 L684.1 484.9 L687.5 479.3 L691.0 473.7 L694.7 468.2 L698.6 462.7 L702.6 457.3 L706.8 452.0 L711.2 446.8 L715.6 441.6 L720.2 436.6 L724.9 431.6 L729.8 426.8 L734.7 422.0 L739.7 417.4 L744.9 412.9 L750.1 408.6 L755.4 404.3 L760.7 400.3 L766.1 396.3 L771.6 392.6 L777.1 389.0 L782.7 385.6 L788.2 382.4 L793.8 379.4 L799.4 376.6 L805.0 374.2 L810.6 372.1 L816.2 370.1 L821.7 368.4 L827.3 366.8 L832.7 365.5 L838.1 364.3 L843.5 363.3 L848.8 362.5 L854.0 361.9 L859.1 361.4 L864.2 361.1 L869.1 361.0 L873.9 361.1 L878.7 361.3 L883.2 361.7 L887.7 362.3 L892.0 363.0 L896.2 363.9 L900.3 365.0 L904.1 366.3 L907.9 367.7 L911.4 369.3 L914.8 371.1 L918.0 373.0 L921.0 375.1 L923.8 377.4 L926.5 379.9 L928.9 382.5 L931.2 385.3 L933.2 388.3 L935.0 391.5 L936.7 394.8 L938.1 398.4 L939.3 402.1 L940.3 406.0 L941.0 410.2 L941.6 414.6 L941.9 419.4 L942.0 424.8" stroke="#c050b8" stroke-width="1" fill="none"/><path d="M942.0 461.4 L941.9 463.1 L941.6 464.9 L941.0 466.8 L940.3 468.8 L939.3 470.9 L938.1 473.1 L936.7 475.4 L935.0 477.7 L933.2 480.2 L931.2 482.7 L928.9 485.2 L926.5 487.9 L923.8 490.6 L921.0 493.3 L918.0 496.2 L914.8 499.0 L911.4 501.9 L907.9 504.9 L904.1 507.9 L900.3 510.9 L896.2 513.9 L892.0 517.0 L887.7 520.1 L883.2 523.2 L878.7 526.3 L873.9 529.4 L869.1 532.5 L864.2 535.6 L859.1 538.7 L854.0 541.7 L848.8 544.8 L843.5 547.8 L838.1 550.8 L832.7 553.7 L827.3 556.7 L821.7 559.5 L816.2 562.3 L810.6 565.1 L805.0 567.8 L799.4 570.4 L793.8 572.8 L788.2 575.2 L782.7 577.5 L777.1 579.7 L771.6 581.8 L766.1 583.8 L760.7 585.8 L755.4 587.7 L750.1 589.4 L744.9 591.1 L739.7 592.8 L734.7 594.3 L729.8 595.7 L724.9 597.0 L720.2 598.3 L715.6 599.4 L711.2 600.5 L706.8 601.4 L702.6 602.3 L698.6 603.0 L694.7 603.6 L691.0 604.2 L687.5 604.6 L684.1 604.9 L680.9 605.1 L677.9 605.2 L675.0 605.2 L672.4 605.1 L669.9 604.9 L667.7 604.5 L665.7 604.1 L663.8 603.5 L662.2 602.8 L660.8 602.1 L659.6 601.2 L658.6 600.2 L657.8 599.1 L657.3 597.9 L657.0 596.5 L656.8 595.1" stroke="#3a58c8" stroke-width="1" fill="none"/><path d="M656.8 578.8 L657.0 572.5 L657.3 566.7 L657.8 561.1 L658.6 555.5 L659.6 550.0 L660.8 544.4 L662.2 538.9 L663.8 533.3 L665.7 527.7 L667.7 522.2 L669.9 516.6 L672.4 511.1 L675.0 505.5 L677.9 500.0 L680.9 494.5 L684.1 489.1 L687.5 483.6 L691.0 478.2 L694.7 472.9 L698.6 467.6 L702.6 462.4 L706.8 457.2 L711.2 452.1 L715.6 447.1 L720.2 442.2 L724.9 437.4 L729.8 432.6 L734.7 428.0 L739.7 423.5 L744.9 419.1 L750.1 414.8 L755.4 410.7 L760.7 406.7 L766.1 402.8 L771.6 399.1 L777.1 395.5 L782.7 392.1 L788.2 388.9 L793.8 385.9 L799.4 383.2 L805.0 380.7 L810.6 378.5 L816.2 376.5 L821.7 374.7 L827.3 373.1 L832.7 371.7 L838.1 370.4 L843.5 369.3 L848.8 368.4 L854.0 367.6 L859.1 367.1 L864.2 366.6 L869.1 366.4 L873.9 366.3 L878.7 366.4 L883.2 366.7 L887.7 367.1 L892.0 367.7 L896.2 368.4 L900.3 369.3 L904.1 370.4 L907.9 371.7 L911.4 373.1 L914.8 374.7 L918.0 376.4 L921.0 378.3 L923.8 380.4 L926.5 382.7 L928.9 385.1 L931.2 387.7 L933.2 390.5 L935.0 393.4 L936.7 396.6 L938.1 399.9 L939.3 403.4 L940.3 407.1 L941.0 411.0 L941.6 415.2 L941.9 419.7 L942.0 424.8" stroke="#66d8ee" stroke-width="1" fill="none"/><path d="M942.0 461.4 L941.9 462.6 L941.6 463.9 L941.0 465.3 L940.3 466.8 L939.3 468.4 L938.1 470.0 L936.7 471.8 L935.0 473.7 L933.2 475.6 L931.2 477.6 L928.9 479.7 L926.5 481.9 L923.8 484.1 L921.0 486.5 L918.0 488.8 L914.8 491.3 L911.4 493.8 L907.9 496.3 L904.1 498.9 L900.3 501.6 L896.2 504.2 L892.0 507.0 L887.7 509.7 L883.2 512.5 L878.7 515.3 L873.9 518.1 L869.1 521.0 L864.2 523.8 L859.1 526.7 L854.0 529.6 L848.8 532.4 L843.5 535.3 L838.1 538.1 L832.7 541.0 L827.3 543.8 L821.7 546.5 L816.2 549.3 L810.6 552.0 L805.0 554.6 L799.4 557.2 L793.8 559.8 L788.2 562.2 L782.7 564.6 L777.1 566.9 L771.6 569.2 L766.1 571.4 L760.7 573.5 L755.4 575.6 L750.1 577.6 L744.9 579.5 L739.7 581.4 L734.7 583.2 L729.8 584.9 L724.9 586.5 L720.2 588.0 L715.6 589.5 L711.2 590.9 L706.8 592.2 L702.6 593.3 L698.6 594.4 L694.7 595.5 L691.0 596.4 L687.5 597.2 L684.1 597.9 L680.9 598.5 L677.9 599.0 L675.0 599.4 L672.4 599.7 L669.9 599.9 L667.7 600.0 L665.7 600.0 L663.8 599.9 L662.2 599.7 L660.8 599.3 L659.6 598.9 L658.6 598.3 L657.8 597.7 L657.3 596.9 L657.0 596.1 L656.8 595.1" stroke="#40c040" stroke-width="1" fill="none"/><path d="M656.8 578.8 L657.0 573.0 L657.3 567.6 L657.8 562.4 L658.6 557.2 L659.6 552.0 L660.8 546.9 L662.2 541.7 L663.8 536.5 L665.7 531.2 L667.7 526.0 L669.9 520.8 L672.4 515.6 L675.0 510.3 L677.9 505.1 L680.9 499.9 L684.1 494.7 L687.5 489.6 L691.0 484.5 L694.7 479.4 L698.6 474.3 L702.6 469.3 L706.8 464.4 L711.2 459.5 L715.6 454.7 L720.2 450.0 L724.9 445.3 L729.8 440.7 L734.7 436.2 L739.7 431.9 L744.9 427.6 L750.1 423.4 L755.4 419.4 L760.7 415.4 L766.1 411.7 L771.6 408.0 L777.1 404.5 L782.7 401.1 L788.2 397.9 L793.8 394.9 L799.4 392.1 L805.0 389.7 L810.6 387.4 L816.2 385.3 L821.7 383.4 L827.3 381.7 L832.7 380.2 L838.1 378.8 L843.5 377.5 L848.8 376.5 L854.0 375.6 L859.1 374.8 L864.2 374.2 L869.1 373.8 L873.9 373.5 L878.7 373.4 L883.2 373.5 L887.7 373.7 L892.0 374.0 L896.2 374.6 L900.3 375.2 L904.1 376.1 L907.9 377.1 L911.4 378.2 L914.8 379.6 L918.0 381.1 L921.0 382.7 L923.8 384.5 L926.5 386.5 L928.9 388.6 L931.2 391.0 L933.2 393.4 L935.0 396.1 L936.7 398.9 L938.1 401.9 L939.3 405.1 L940.3 408.5 L941.0 412.1 L941.6 415.9 L941.9 420.0 L942.0 424.8" stroke="#e8d870" stroke-width="1" fill="none"/><path d="M942.0 461.4 L941.9 461.9 L941.6 462.5 L941.0 463.2 L940.3 464.1 L939.3 465.0 L938.1 466.0 L936.7 467.1 L935.0 468.3 L933.2 469.6 L931.2 471.0 L928.9 472.5 L926.5 474.0 L923.8 475.7 L921.0 477.4 L918.0 479.2 L914.8 481.1 L911.4 483.0 L907.9 485.1 L904.1 487.2 L900.3 489.3 L896.2 491.5 L892.0 493.8 L887.7 496.1 L883.2 498.5 L878.7 500.9 L873.9 503.4 L869.1 505.9 L864.2 508.4 L859.1 511.0 L854.0 513.6 L848.8 516.2 L843.5 518.8 L838.1 521.4 L832.7 524.1 L827.3 526.8 L821.7 529.4 L816.2 532.1 L810.6 534.7 L805.0 537.4 L799.4 540.0 L793.8 542.6 L788.2 545.1 L782.7 547.6 L777.1 550.1 L771.6 552.6 L766.1 555.0 L760.7 557.4 L755.4 559.7 L750.1 562.0 L744.9 564.2 L739.7 566.4 L734.7 568.6 L729.8 570.6 L724.9 572.6 L720.2 574.6 L715.6 576.4 L711.2 578.2 L706.8 580.0 L702.6 581.6 L698.6 583.2 L694.7 584.7 L691.0 586.1 L687.5 587.4 L684.1 588.6 L680.9 589.8 L677.9 590.8 L675.0 591.8 L672.4 592.6 L669.9 593.4 L667.7 594.1 L665.7 594.6 L663.8 595.1 L662.2 595.5 L660.8 595.7 L659.6 595.9 L658.6 595.9 L657.8 595.9 L657.3 595.7 L657.0 595.5 L656.8 595.1" stroke="#66d8ee" stroke-width="1" fill="none"/><path d="M656.8 578.8 L657.0 573.4 L657.3 568.4 L657.8 563.6 L658.6 558.7 L659.6 553.9 L660.8 549.0 L662.2 544.2 L663.8 539.3 L665.7 534.4 L667.7 529.4 L669.9 524.5 L672.4 519.6 L675.0 514.6 L677.9 509.7 L680.9 504.7 L684.1 499.8 L687.5 494.9 L691.0 490.0 L694.7 485.1 L698.6 480.3 L702.6 475.5 L706.8 470.7 L711.2 466.0 L715.6 461.4 L720.2 456.8 L724.9 452.3 L729.8 447.9 L734.7 443.6 L739.7 439.3 L744.9 435.1 L750.1 431.1 L755.4 427.1 L760.7 423.2 L766.1 419.5 L771.6 415.9 L777.1 412.4 L782.7 409.1 L788.2 405.9 L793.8 402.9 L799.4 400.1 L805.0 397.6 L810.6 395.3 L816.2 393.1 L821.7 391.2 L827.3 389.3 L832.7 387.7 L838.1 386.2 L843.5 384.8 L848.8 383.6 L854.0 382.6 L859.1 381.7 L864.2 381.0 L869.1 380.4 L873.9 379.9 L878.7 379.6 L883.2 379.5 L887.7 379.5 L892.0 379.7 L896.2 380.0 L900.3 380.5 L904.1 381.1 L907.9 381.9 L911.4 382.8 L914.8 383.9 L918.0 385.2 L921.0 386.6 L923.8 388.2 L926.5 389.9 L928.9 391.8 L931.2 393.8 L933.2 396.1 L935.0 398.4 L936.7 401.0 L938.1 403.7 L939.3 406.6 L940.3 409.7 L941.0 413.0 L941.6 416.6 L941.9 420.4 L942.0 424.8" stroke="#a050d0" stroke-width="1" fill="none"/><path d="M942.0 461.4 L941.9 461.4 L941.6 461.6 L941.0 461.8 L940.3 462.2 L939.3 462.7 L938.1 463.2 L936.7 463.9 L935.0 464.7 L933.2 465.5 L931.2 466.5 L928.9 467.5 L926.5 468.7 L923.8 469.9 L921.0 471.2 L918.0 472.7 L914.8 474.2 L911.4 475.7 L907.9 477.4 L904.1 479.1 L900.3 481.0 L896.2 482.9 L892.0 484.8 L887.7 486.9 L883.2 488.9 L878.7 491.1 L873.9 493.3 L869.1 495.6 L864.2 497.9 L859.1 500.3 L854.0 502.7 L848.8 505.1 L843.5 507.6 L838.1 510.1 L832.7 512.6 L827.3 515.2 L821.7 517.8 L816.2 520.4 L810.6 523.0 L805.0 525.6 L799.4 528.2 L793.8 530.9 L788.2 533.5 L782.7 536.1 L777.1 538.7 L771.6 541.3 L766.1 543.9 L760.7 546.4 L755.4 548.9 L750.1 551.4 L744.9 553.8 L739.7 556.2 L734.7 558.6 L729.8 560.9 L724.9 563.2 L720.2 565.4 L715.6 567.5 L711.2 569.6 L706.8 571.7 L702.6 573.6 L698.6 575.5 L694.7 577.3 L691.0 579.1 L687.5 580.8 L684.1 582.3 L680.9 583.8 L677.9 585.3 L675.0 586.6 L672.4 587.8 L669.9 589.0 L667.7 590.0 L665.7 591.0 L663.8 591.8 L662.2 592.6 L660.8 593.3 L659.6 593.8 L658.6 594.3 L657.8 594.6 L657.3 594.9 L657.0 595.1 L656.8 595.1" stroke="#f0a040" stroke-width="1" fill="none"/><path d="M656.8 578.8 L657.0 573.9 L657.3 569.4 L657.8 565.0 L658.6 560.6 L659.6 556.2 L660.8 551.7 L662.2 547.2 L663.8 542.7 L665.7 538.2 L667.7 533.7 L669.9 529.1 L672.4 524.5 L675.0 519.9 L677.9 515.3 L680.9 510.6 L684.1 506.0 L687.5 501.4 L691.0 496.8 L694.7 492.2 L698.6 487.7 L702.6 483.1 L706.8 478.6 L711.2 474.1 L715.6 469.7 L720.2 465.4 L724.9 461.0 L729.8 456.8 L734.7 452.6 L739.7 448.5 L744.9 444.5 L750.1 440.5 L755.4 436.7 L760.7 432.9 L766.1 429.2 L771.6 425.7 L777.1 422.3 L782.7 419.0 L788.2 415.8 L793.8 412.8 L799.4 410.0 L805.0 407.4 L810.6 405.0 L816.2 402.8 L821.7 400.7 L827.3 398.8 L832.7 397.0 L838.1 395.4 L843.5 393.9 L848.8 392.5 L854.0 391.3 L859.1 390.2 L864.2 389.3 L869.1 388.5 L873.9 387.9 L878.7 387.3 L883.2 387.0 L887.7 386.8 L892.0 386.7 L896.2 386.8 L900.3 387.0 L904.1 387.3 L907.9 387.9 L911.4 388.5 L914.8 389.3 L918.0 390.3 L921.0 391.4 L923.8 392.7 L926.5 394.1 L928.9 395.7 L931.2 397.4 L933.2 399.3 L935.0 401.4 L936.7 403.6 L938.1 406.0 L939.3 408.6 L940.3 411.3 L941.0 414.2 L941.6 417.4 L941.9 420.8 L942.0 424.8" stroke="#8a3a20" stroke-width="1" fill="none"/><path d="M942.0 461.4 L941.9 461.4 L941.6 461.6 L941.0 461.8 L940.3 462.2 L939.3 462.7 L938.1 463.2 L936.7 463.9 L935.0 464.7 L933.2 465.5 L931.2 466.5 L928.9 467.5 L926.5 468.7 L923.8 469.9 L921.0 471.2 L918.0 472.7 L914.8 474.2 L911.4 475.7 L907.9 477.4 L904.1 479.1 L900.3 481.0 L896.2 482.9 L892.0 484.8 L887.7 486.9 L883.2 488.9 L878.7 491.1 L873.9 493.3 L869.1 495.6 L864.2 497.9 L859.1 500.3 L854.0 502.7 L848.8 505.1 L843.5 507.6 L838.1 510.1 L832.7 512.6 L827.3 515.2 L821.7 517.8 L816.2 520.4 L810.6 523.0 L805.0 525.6 L799.4 528.2 L793.8 530.9 L788.2 533.5 L782.7 536.1 L777.1 538.7 L771.6 541.3 L766.1 543.9 L760.7 546.4 L755.4 548.9 L750.1 551.4 L744.9 553.8 L739.7 556.2 L734.7 558.6 L729.8 560.9 L724.9 563.2 L720.2 565.4 L715.6 567.5 L711.2 569.6 L706.8 571.7 L702.6 573.6 L698.6 575.5 L694.7 577.3 L691.0 579.1 L687.5 580.8 L684.1 582.3 L680.9 583.8 L677.9 585.3 L675.0 586.6 L672.4 587.8 L669.9 589.0 L667.7 590.0 L665.7 591.0 L663.8 591.8 L662.2 592.6 L660.8 593.3 L659.6 593.8 L658.6 594.3 L657.8 594.6 L657.3 594.9 L657.0 595.1 L656.8 595.1" stroke="#2a2aa0" stroke-width="1" fill="none"/><path d="M656.8 578.8 L657.0 574.3 L657.3 570.2 L657.8 566.1 L658.6 562.0 L659.6 557.9 L660.8 553.8 L662.2 549.6 L663.8 545.4 L665.7 541.2 L667.7 536.9 L669.9 532.7 L672.4 528.3 L675.0 524.0 L677.9 519.6 L680.9 515.3 L684.1 510.9 L687.5 506.5 L691.0 502.1 L694.7 497.7 L698.6 493.4 L702.6 489.0 L706.8 484.7 L711.2 480.4 L715.6 476.2 L720.2 472.0 L724.9 467.8 L729.8 463.7 L734.7 459.6 L739.7 455.6 L744.9 451.7 L750.1 447.9 L755.4 444.1 L760.7 440.4 L766.1 436.8 L771.6 433.3 L777.1 429.9 L782.7 426.7 L788.2 423.5 L793.8 420.5 L799.4 417.7 L805.0 415.1 L810.6 412.6 L816.2 410.3 L821.7 408.2 L827.3 406.2 L832.7 404.3 L838.1 402.5 L843.5 400.9 L848.8 399.4 L854.0 398.1 L859.1 396.9 L864.2 395.8 L869.1 394.8 L873.9 394.0 L878.7 393.3 L883.2 392.8 L887.7 392.4 L892.0 392.1 L896.2 392.0 L900.3 392.0 L904.1 392.2 L907.9 392.5 L911.4 392.9 L914.8 393.5 L918.0 394.3 L921.0 395.2 L923.8 396.2 L926.5 397.4 L928.9 398.7 L931.2 400.2 L933.2 401.8 L935.0 403.7 L936.7 405.6 L938.1 407.7 L939.3 410.0 L940.3 412.5 L941.0 415.2 L941.6 418.0 L941.9 421.2 L942.0 424.8" stroke="#50d050" stroke-width="1" fill="none"/><path d="M942.0 461.4 L941.9 462.7 L941.6 464.1 L941.0 465.6 L940.3 467.2 L939.3 468.9 L938.1 470.7 L936.7 472.6 L935.0 474.6 L933.2 476.6 L931.2 478.8 L928.9 481.0 L926.5 483.2 L923.8 485.6 L921.0 488.0 L918.0 490.5 L914.8 493.0 L911.4 495.6 L907.9 498.2 L904.1 500.9 L900.3 503.7 L896.2 506.4 L892.0 509.2 L887.7 512.0 L883.2 514.9 L878.7 517.8 L873.9 520.7 L869.1 523.6 L864.2 526.5 L859.1 529.4 L854.0 532.3 L848.8 535.2 L843.5 538.1 L838.1 541.0 L832.7 543.8 L827.3 546.7 L821.7 549.5 L816.2 552.2 L810.6 554.9 L805.0 557.6 L799.4 560.2 L793.8 562.7 L788.2 565.1 L782.7 567.5 L777.1 569.8 L771.6 572.0 L766.1 574.2 L760.7 576.3 L755.4 578.3 L750.1 580.3 L744.9 582.1 L739.7 583.9 L734.7 585.7 L729.8 587.3 L724.9 588.9 L720.2 590.3 L715.6 591.7 L711.2 593.0 L706.8 594.2 L702.6 595.3 L698.6 596.4 L694.7 597.3 L691.0 598.1 L687.5 598.8 L684.1 599.5 L680.9 600.0 L677.9 600.4 L675.0 600.7 L672.4 600.9 L669.9 601.0 L667.7 601.0 L665.7 600.9 L663.8 600.7 L662.2 600.4 L660.8 599.9 L659.6 599.4 L658.6 598.8 L657.8 598.0 L657.3 597.1 L657.0 596.2 L656.8 595.1" stroke="#c050b8" stroke-width="1" fill="none"/><path d="M656.8 578.8 L657.0 575.7 L657.3 572.8 L657.8 570.0 L658.6 567.0 L659.6 564.1 L660.8 561.0 L662.2 558.0 L663.8 554.8 L665.7 551.6 L667.7 548.3 L669.9 545.0 L672.4 541.6 L675.0 538.2 L677.9 534.8 L680.9 531.3 L684.1 527.7 L687.5 524.1 L691.0 520.5 L694.7 516.9 L698.6 513.3 L702.6 509.6 L706.8 505.9 L711.2 502.3 L715.6 498.6 L720.2 494.9 L724.9 491.3 L729.8 487.6 L734.7 484.0 L739.7 480.4 L744.9 476.9 L750.1 473.4 L755.4 469.9 L760.7 466.4 L766.1 463.1 L771.6 459.7 L777.1 456.5 L782.7 453.3 L788.2 450.2 L793.8 447.2 L799.4 444.3 L805.0 441.5 L810.6 438.9 L816.2 436.4 L821.7 434.0 L827.3 431.7 L832.7 429.4 L838.1 427.3 L843.5 425.3 L848.8 423.4 L854.0 421.6 L859.1 419.9 L864.2 418.3 L869.1 416.8 L873.9 415.4 L878.7 414.1 L883.2 413.0 L887.7 411.9 L892.0 411.0 L896.2 410.2 L900.3 409.5 L904.1 409.0 L907.9 408.5 L911.4 408.2 L914.8 408.1 L918.0 408.0 L921.0 408.1 L923.8 408.3 L926.5 408.7 L928.9 409.2 L931.2 409.8 L933.2 410.6 L935.0 411.5 L936.7 412.6 L938.1 413.8 L939.3 415.2 L940.3 416.7 L941.0 418.4 L941.6 420.3 L941.9 422.3 L942.0 424.8" stroke="#3a5ad0" stroke-width="1" fill="none"/><path d="M942.0 461.4 L941.9 463.4 L941.6 465.5 L941.0 467.7 L940.3 469.9 L939.3 472.3 L938.1 474.8 L936.7 477.3 L935.0 479.9 L933.2 482.6 L931.2 485.4 L928.9 488.2 L926.5 491.1 L923.8 494.0 L921.0 497.0 L918.0 500.1 L914.8 503.2 L911.4 506.3 L907.9 509.5 L904.1 512.7 L900.3 515.9 L896.2 519.1 L892.0 522.4 L887.7 525.6 L883.2 528.9 L878.7 532.1 L873.9 535.4 L869.1 538.6 L864.2 541.9 L859.1 545.1 L854.0 548.3 L848.8 551.4 L843.5 554.5 L838.1 557.6 L832.7 560.6 L827.3 563.6 L821.7 566.5 L816.2 569.4 L810.6 572.1 L805.0 574.8 L799.4 577.4 L793.8 579.8 L788.2 582.2 L782.7 584.4 L777.1 586.5 L771.6 588.6 L766.1 590.5 L760.7 592.4 L755.4 594.2 L750.1 595.8 L744.9 597.4 L739.7 598.9 L734.7 600.3 L729.8 601.5 L724.9 602.7 L720.2 603.8 L715.6 604.8 L711.2 605.6 L706.8 606.4 L702.6 607.1 L698.6 607.6 L694.7 608.0 L691.0 608.4 L687.5 608.6 L684.1 608.7 L680.9 608.7 L677.9 608.6 L675.0 608.3 L672.4 608.0 L669.9 607.5 L667.7 606.9 L665.7 606.3 L663.8 605.5 L662.2 604.6 L660.8 603.5 L659.6 602.4 L658.6 601.2 L657.8 599.8 L657.3 598.3 L657.0 596.8 L656.8 595.1" stroke="#a050d0" stroke-width="1" fill="none"/><path d="M656.8 578.8 L657.0 576.7 L657.3 574.6 L657.8 572.6 L658.6 570.4 L659.6 568.2 L660.8 565.9 L662.2 563.6 L663.8 561.1 L665.7 558.6 L667.7 556.0 L669.9 553.4 L672.4 550.6 L675.0 547.8 L677.9 545.0 L680.9 542.1 L684.1 539.1 L687.5 536.1 L691.0 533.0 L694.7 529.9 L698.6 526.7 L702.6 523.5 L706.8 520.3 L711.2 517.0 L715.6 513.8 L720.2 510.5 L724.9 507.2 L729.8 503.8 L734.7 500.5 L739.7 497.2 L744.9 493.9 L750.1 490.6 L755.4 487.3 L760.7 484.0 L766.1 480.8 L771.6 477.6 L777.1 474.4 L782.7 471.3 L788.2 468.2 L793.8 465.2 L799.4 462.3 L805.0 459.4 L810.6 456.7 L816.2 454.0 L821.7 451.4 L827.3 448.9 L832.7 446.4 L838.1 444.1 L843.5 441.8 L848.8 439.6 L854.0 437.4 L859.1 435.4 L864.2 433.5 L869.1 431.6 L873.9 429.8 L878.7 428.2 L883.2 426.6 L887.7 425.1 L892.0 423.8 L896.2 422.5 L900.3 421.4 L904.1 420.3 L907.9 419.4 L911.4 418.6 L914.8 417.9 L918.0 417.3 L921.0 416.9 L923.8 416.6 L926.5 416.4 L928.9 416.3 L931.2 416.4 L933.2 416.5 L935.0 416.9 L936.7 417.3 L938.1 417.9 L939.3 418.7 L940.3 419.5 L941.0 420.6 L941.6 421.8 L941.9 423.1 L942.0 424.8" stroke="#9a50c0" stroke-width="1" fill="none"/><path d="M942.0 461.4 L941.9 463.0 L941.6 464.6 L941.0 466.4 L940.3 468.3 L939.3 470.2 L938.1 472.3 L936.7 474.4 L935.0 476.6 L933.2 478.9 L931.2 481.3 L928.9 483.7 L926.5 486.2 L923.8 488.8 L921.0 491.4 L918.0 494.1 L914.8 496.8 L911.4 499.6 L907.9 502.5 L904.1 505.3 L900.3 508.3 L896.2 511.2 L892.0 514.2 L887.7 517.2 L883.2 520.2 L878.7 523.2 L873.9 526.2 L869.1 529.2 L864.2 532.3 L859.1 535.3 L854.0 538.3 L848.8 541.3 L843.5 544.3 L838.1 547.2 L832.7 550.2 L827.3 553.0 L821.7 555.9 L816.2 558.7 L810.6 561.4 L805.0 564.1 L799.4 566.7 L793.8 569.1 L788.2 571.5 L782.7 573.8 L777.1 576.1 L771.6 578.2 L766.1 580.3 L760.7 582.3 L755.4 584.3 L750.1 586.1 L744.9 587.9 L739.7 589.6 L734.7 591.2 L729.8 592.7 L724.9 594.1 L720.2 595.4 L715.6 596.6 L711.2 597.8 L706.8 598.8 L702.6 599.8 L698.6 600.6 L694.7 601.3 L691.0 602.0 L687.5 602.5 L684.1 602.9 L680.9 603.3 L677.9 603.5 L675.0 603.6 L672.4 603.6 L669.9 603.5 L667.7 603.2 L665.7 602.9 L663.8 602.5 L662.2 601.9 L660.8 601.3 L659.6 600.5 L658.6 599.7 L657.8 598.7 L657.3 597.6 L657.0 596.4 L656.8 595.1" stroke="#e8d870" stroke-width="1" fill="none"/><path d="M656.8 578.8 L657.0 576.9 L657.3 575.0 L657.8 573.1 L658.6 571.1 L659.6 569.1 L660.8 567.0 L662.2 564.8 L663.8 562.5 L665.7 560.1 L667.7 557.7 L669.9 555.1 L672.4 552.5 L675.0 549.9 L677.9 547.1 L680.9 544.3 L684.1 541.5 L687.5 538.6 L691.0 535.6 L694.7 532.6 L698.6 529.5 L702.6 526.4 L706.8 523.3 L711.2 520.1 L715.6 516.9 L720.2 513.7 L724.9 510.5 L729.8 507.2 L734.7 504.0 L739.7 500.7 L744.9 497.5 L750.1 494.2 L755.4 491.0 L760.7 487.7 L766.1 484.5 L771.6 481.3 L777.1 478.2 L782.7 475.1 L788.2 472.0 L793.8 469.0 L799.4 466.1 L805.0 463.2 L810.6 460.4 L816.2 457.7 L821.7 455.1 L827.3 452.5 L832.7 450.0 L838.1 447.6 L843.5 445.3 L848.8 443.0 L854.0 440.8 L859.1 438.7 L864.2 436.7 L869.1 434.7 L873.9 432.9 L878.7 431.1 L883.2 429.5 L887.7 427.9 L892.0 426.4 L896.2 425.1 L900.3 423.8 L904.1 422.7 L907.9 421.7 L911.4 420.8 L914.8 420.0 L918.0 419.3 L921.0 418.7 L923.8 418.3 L926.5 418.0 L928.9 417.8 L931.2 417.7 L933.2 417.8 L935.0 418.0 L936.7 418.3 L938.1 418.8 L939.3 419.4 L940.3 420.1 L941.0 421.0 L941.6 422.1 L941.9 423.3 L942.0 424.8" stroke="#4a2a3a" stroke-width="1" fill="none"/><path d="M942.0 424.8 V461.4 M656.8 595.1 V578.8" stroke="#a03060" stroke-width="1.3" fill="none"/><path d="M656.8 578.8 L657.0 570.0 L657.3 562.1 L657.8 554.3 L658.6 546.7 L659.6 539.2 L660.8 531.7 L662.2 524.3 L663.8 516.9 L665.7 509.5 L667.7 502.2 L669.9 494.9 L672.4 487.7 L675.0 480.5 L677.9 473.5 L680.9 466.4 L684.1 459.5 L687.5 452.7 L691.0 445.9 L694.7 439.2 L698.6 432.7 L702.6 426.3 L706.8 420.0 L711.2 413.8 L715.6 407.8 L720.2 401.9 L724.9 396.2 L729.8 390.6 L734.7 385.2 L739.7 380.0 L744.9 374.9 L750.1 370.1 L755.4 365.4 L760.7 361.0 L766.1 356.7 L771.6 352.7 L777.1 348.9 L782.7 345.4 L788.2 342.1 L793.8 339.1 L799.4 336.4 L805.0 334.2 L810.6 332.3 L816.2 330.7 L821.7 329.4 L827.3 328.3 L832.7 327.5 L838.1 326.9 L843.5 326.5 L848.8 326.3 L854.0 326.4 L859.1 326.7 L864.2 327.2 L869.1 327.9 L873.9 328.8 L878.7 329.9 L883.2 331.2 L887.7 332.8 L892.0 334.5 L896.2 336.5 L900.3 338.6 L904.1 340.9 L907.9 343.5 L911.4 346.2 L914.8 349.1 L918.0 352.2 L921.0 355.6 L923.8 359.1 L926.5 362.8 L928.9 366.7 L931.2 370.8 L933.2 375.1 L935.0 379.6 L936.7 384.3 L938.1 389.2 L939.3 394.3 L940.3 399.7 L941.0 405.3 L941.6 411.3 L941.9 417.6 L942.0 424.8 L942.0 461.4 L941.9 464.5 L941.6 467.7 L941.0 471.0 L940.3 474.4 L939.3 477.9 L938.1 481.5 L936.7 485.1 L935.0 488.8 L933.2 492.6 L931.2 496.4 L928.9 500.2 L926.5 504.1 L923.8 508.1 L921.0 512.0 L918.0 516.0 L914.8 520.0 L911.4 524.1 L907.9 528.1 L904.1 532.1 L900.3 536.2 L896.2 540.2 L892.0 544.2 L887.7 548.1 L883.2 552.1 L878.7 556.0 L873.9 559.8 L869.1 563.7 L864.2 567.4 L859.1 571.1 L854.0 574.8 L848.8 578.3 L843.5 581.8 L838.1 585.2 L832.7 588.5 L827.3 591.7 L821.7 594.8 L816.2 597.8 L810.6 600.7 L805.0 603.4 L799.4 606.0 L793.8 608.3 L788.2 610.4 L782.7 612.4 L777.1 614.3 L771.6 616.0 L766.1 617.6 L760.7 619.1 L755.4 620.4 L750.1 621.6 L744.9 622.7 L739.7 623.6 L734.7 624.4 L729.8 625.1 L724.9 625.7 L720.2 626.1 L715.6 626.4 L711.2 626.5 L706.8 626.6 L702.6 626.5 L698.6 626.2 L694.7 625.9 L691.0 625.4 L687.5 624.7 L684.1 624.0 L680.9 623.1 L677.9 622.1 L675.0 620.9 L672.4 619.7 L669.9 618.3 L667.7 616.8 L665.7 615.1 L663.8 613.4 L662.2 611.5 L660.8 609.5 L659.6 607.4 L658.6 605.1 L657.8 602.8 L657.3 600.3 L657.0 597.8 L656.8 595.1Z" stroke="#b02020" stroke-width="1" stroke-dasharray="3,2" fill="none"/><path d="M657 587 L720 553 M737 544 L800 508.5" stroke="#a82020" stroke-width="1" fill="none"/><path d="M800 508.5 V488 Q801 455 826 440" stroke="#a82020" stroke-width="1.2" fill="none"/><path d="M656.8 585.0 C658.3 577.0 660.3 549.7 665.4 537.2 C670.6 524.7 674.9 519.3 687.7 510.1 C700.5 501.0 723.4 491.9 742.0 482.2 C760.6 472.6 780.1 461.7 799.2 452.2 C818.2 442.7 837.7 433.5 856.3 425.2 C874.9 416.9 897.6 404.6 910.6 402.4 C923.5 400.2 928.8 407.5 934.0 412.1 C939.3 416.7 940.7 422.7 942.0 430.0 C943.4 437.2 942.5 448.7 942.0 455.5 C941.5 462.3 943.9 464.4 939.2 470.8 C934.4 477.2 927.3 483.9 913.5 493.8 C899.6 503.8 875.4 518.7 856.3 530.6 C837.3 542.5 818.2 553.7 799.2 565.3 C780.1 576.9 757.2 592.0 742.0 600.0 C726.8 608.0 717.2 610.7 707.7 613.3 C698.2 615.9 691.9 616.8 684.9 615.6 C677.8 614.4 670.1 611.2 665.4 606.1 C660.8 601.0 658.3 588.5 656.8 585.0" stroke="#e01818" stroke-width="2.2" fill="none"/><path d="M799.2 508.6 H1027.8" stroke="#70e070" stroke-width="1.2"/><path d="M798 672 H973" stroke="#7a1212" stroke-width="1"/><path d="M800.3 721 V594 L809.5 603.3 L1186 415.5 V449 L813 633 Q803.5 638 802.8 650 V666" stroke="#1a2a8a" stroke-width="1" fill="none"/><path d="M627.7 272.3 H1199.4 V836.3 H627.7" stroke="#777" stroke-width="1.2" fill="none"/><path d="M627.7 272.6 H1199.4" stroke="#000" stroke-width="1.6"/><path d="M627.7 272.3 V836.3" stroke="#666" stroke-width="1.4"/><path d="M622.5 299.8 H627.7" stroke="#222" stroke-width="1.2"/><path d="M622.5 325.3 H627.7" stroke="#222" stroke-width="1.2"/><path d="M622.5 350.8 H627.7" stroke="#222" stroke-width="1.2"/><path d="M622.5 376.4 H627.7" stroke="#222" stroke-width="1.2"/><path d="M622.5 401.9 H627.7" stroke="#222" stroke-width="1.2"/><path d="M622.5 427.4 H627.7" stroke="#222" stroke-width="1.2"/><path d="M622.5 453.0 H627.7" stroke="#222" stroke-width="1.2"/><path d="M622.5 478.5 H627.7" stroke="#222" stroke-width="1.2"/><path d="M622.5 504.0 H627.7" stroke="#222" stroke-width="1.2"/><path d="M622.5 529.6 H627.7" stroke="#222" stroke-width="1.2"/><path d="M622.5 555.1 H627.7" stroke="#222" stroke-width="1.2"/><path d="M622.5 580.6 H627.7" stroke="#222" stroke-width="1.2"/><path d="M622.5 606.1 H627.7" stroke="#222" stroke-width="1.2"/><path d="M622.5 631.7 H627.7" stroke="#222" stroke-width="1.2"/><path d="M622.5 657.2 H627.7" stroke="#222" stroke-width="1.2"/><path d="M622.5 682.7 H627.7" stroke="#222" stroke-width="1.2"/><path d="M622.5 708.3 H627.7" stroke="#222" stroke-width="1.2"/><path d="M622.5 733.8 H627.7" stroke="#222" stroke-width="1.2"/><path d="M622.5 759.3 H627.7" stroke="#222" stroke-width="1.2"/><path d="M622.5 784.9 H627.7" stroke="#222" stroke-width="1.2"/><path d="M622.5 810.4 H627.7" stroke="#222" stroke-width="1.2"/><path d="M622.5 272.5 H627.7" stroke="#222" stroke-width="1.2"/><path d="M622.5 835.3 H627.7" stroke="#222" stroke-width="1.2"/><path d="M622.5 274.3 H627.7" stroke="#222" stroke-width="1.2"/><path d="M627.7 838 V842.5" stroke="#222" stroke-width="1.2"/><path d="M684.9 838 V842.5" stroke="#222" stroke-width="1.2"/><path d="M742.0 838 V842.5" stroke="#222" stroke-width="1.2"/><path d="M799.2 838 V842.5" stroke="#222" stroke-width="1.2"/><path d="M856.4 838 V842.5" stroke="#222" stroke-width="1.2"/><path d="M913.6 838 V842.5" stroke="#222" stroke-width="1.2"/><path d="M970.7 838 V842.5" stroke="#222" stroke-width="1.2"/><path d="M1027.9 838 V842.5" stroke="#222" stroke-width="1.2"/><path d="M1085.1 838 V842.5" stroke="#222" stroke-width="1.2"/><path d="M1142.2 838 V842.5" stroke="#222" stroke-width="1.2"/><path d="M1199.4 838 V842.5" stroke="#222" stroke-width="1.2"/></svg>
<div class="t" style="right:1286px;top:295.57px;font-size:11px;color:#333;">7000</div>
<div class="t" style="right:1286px;top:321.10px;font-size:11px;color:#333;">6500</div>
<div class="t" style="right:1286px;top:346.63px;font-size:11px;color:#333;">6000</div>
<div class="t" style="right:1286px;top:372.16px;font-size:11px;color:#333;">5500</div>
<div class="t" style="right:1286px;top:397.69px;font-size:11px;color:#333;">5000</div>
<div class="t" style="right:1286px;top:423.22px;font-size:11px;color:#333;">4500</div>
<div class="t" style="right:1286px;top:448.75px;font-size:11px;color:#333;">4000</div>
<div class="t" style="right:1286px;top:474.28px;font-size:11px;color:#333;">3500</div>
<div class="t" style="right:1286px;top:499.81px;font-size:11px;color:#333;">3000</div>
<div class="t" style="right:1286px;top:525.34px;font-size:11px;color:#333;">2500</div>
<div class="t" style="right:1286px;top:550.87px;font-size:11px;color:#333;">2000</div>
<div class="t" style="right:1286px;top:576.40px;font-size:11px;color:#333;">1500</div>
<div class="t" style="right:1286px;top:601.93px;font-size:11px;color:#333;">1000</div>
<div class="t" style="right:1286px;top:627.46px;font-size:11px;color:#333;">500</div>
<div class="t" style="right:1286px;top:652.99px;font-size:11px;color:#333;">0</div>
<div class="t" style="right:1286px;top:678.52px;font-size:11px;color:#333;">-500</div>
<div class="t" style="right:1286px;top:704.05px;font-size:11px;color:#333;">-1000</div>
<div class="t" style="right:1286px;top:729.58px;font-size:11px;color:#333;">-1500</div>
<div class="t" style="right:1286px;top:755.11px;font-size:11px;color:#333;">-2000</div>
<div class="t" style="right:1286px;top:780.64px;font-size:11px;color:#333;">-2500</div>
<div class="t" style="right:1286px;top:806.17px;font-size:11px;color:#333;">-3000</div>
<div class="t" style="right:1286px;top:268.91px;font-size:11px;color:#333;">7533,8</div>
<div class="t" style="right:1286px;top:830.73px;font-size:11px;color:#333;">-3488,92</div>
<div class="t" style="left:627.7px;transform:translateX(-50%);top:845.99px;font-size:11px;color:#333;">-30,00</div>
<div class="t" style="left:684.87px;transform:translateX(-50%);top:845.99px;font-size:11px;color:#333;">-20,00</div>
<div class="t" style="left:742.0400000000001px;transform:translateX(-50%);top:845.99px;font-size:11px;color:#333;">-10,00</div>
<div class="t" style="left:799.21px;transform:translateX(-50%);top:845.99px;font-size:11px;color:#333;">0,00</div>
<div class="t" style="left:856.3800000000001px;transform:translateX(-50%);top:845.99px;font-size:11px;color:#333;">10,00</div>
<div class="t" style="left:913.5500000000001px;transform:translateX(-50%);top:845.99px;font-size:11px;color:#333;">20,00</div>
<div class="t" style="left:970.72px;transform:translateX(-50%);top:845.99px;font-size:11px;color:#333;">30,00</div>
<div class="t" style="left:1027.89px;transform:translateX(-50%);top:845.99px;font-size:11px;color:#333;">40,00</div>
<div class="t" style="left:1085.06px;transform:translateX(-50%);top:845.99px;font-size:11px;color:#333;">50,00</div>
<div class="t" style="left:1142.23px;transform:translateX(-50%);top:845.99px;font-size:11px;color:#333;">60,00</div>
<div class="t" style="left:1199.4px;transform:translateX(-50%);top:845.99px;font-size:11px;color:#333;">70,00</div>
<div class="t" style="left:910px;transform:translateX(-50%);top:861.17px;font-size:12.2px;color:#333;">Position [mm]</div>
<div class="t" style="left:566.5px;top:554.5px;font-size:12px;color:#333;transform:translate(-50%,-50%) rotate(-90deg)">Load [N]</div>
</body></html>
